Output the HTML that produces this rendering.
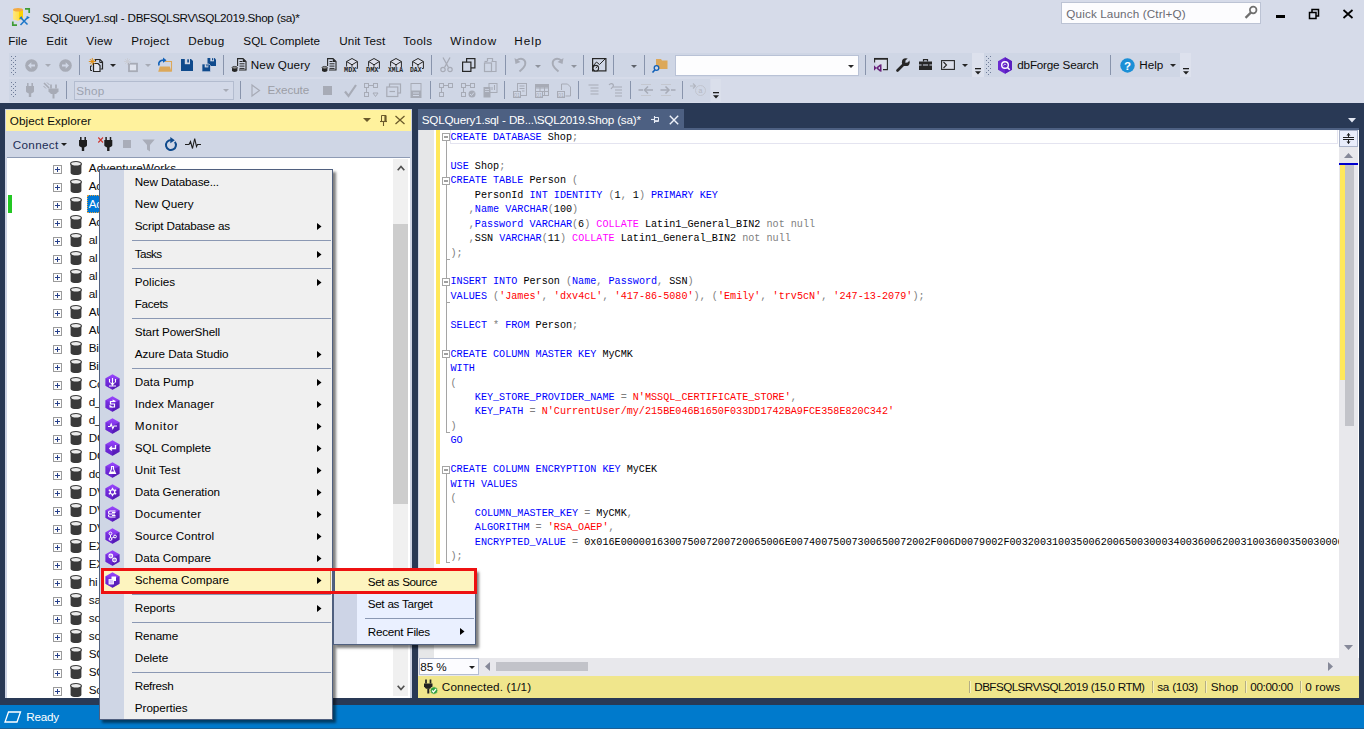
<!DOCTYPE html>
<html><head><meta charset="utf-8"><title>SQLQuery1.sql - DBFSQLSRV\SQL2019.Shop (sa)* - Microsoft SQL Server Management Studio</title>
<style>
html,body{margin:0;padding:0;}
body{width:1364px;height:729px;overflow:hidden;position:relative;background:#d6dbe9;font-family:"Liberation Sans",sans-serif;font-size:12px;}
body div,body span,body svg,body pre{position:absolute;}
span{white-space:pre;}
svg{overflow:visible;}
</style></head><body>
<div style="left:0px;top:0px;width:1364px;height:103px;background:#d6dbe9;"></div>
<div style="left:0px;top:103px;width:1364px;height:602px;background:#293955;"></div>
<div style="left:0px;top:705px;width:1364px;height:24px;background:#007acc;"></div>
<div style="left:0px;top:728px;width:1364px;height:1px;background:#1c5f94;"></div>
<span style="left:42.30px;top:9.60px;font-size:11.7px;line-height:16px;color:#0c0c0c;letter-spacing:-0.359px;word-spacing:0.359px;">SQLQuery1.sql - DBFSQLSRV\SQL2019.Shop (sa)*</span>
<div style="left:1061px;top:2px;width:200px;height:22px;background:#fcfcfe;border:1px solid #bcc3d4;box-sizing:border-box;"></div>
<span style="left:1066.30px;top:5.60px;font-size:11.7px;line-height:16px;color:#6a6a72;letter-spacing:0.149px;word-spacing:-0.149px;">Quick Launch (Ctrl+Q)</span>
<span style="left:8.30px;top:32.70px;font-size:11.7px;line-height:16px;color:#0c0c0c;letter-spacing:0.016px;">File</span>
<span style="left:46.30px;top:32.70px;font-size:11.7px;line-height:16px;color:#0c0c0c;letter-spacing:0.247px;">Edit</span>
<span style="left:86.30px;top:32.70px;font-size:11.7px;line-height:16px;color:#0c0c0c;letter-spacing:0.251px;">View</span>
<span style="left:131.30px;top:32.70px;font-size:11.7px;line-height:16px;color:#0c0c0c;letter-spacing:0.248px;">Project</span>
<span style="left:188.30px;top:32.70px;font-size:11.7px;line-height:16px;color:#0c0c0c;letter-spacing:0.356px;">Debug</span>
<span style="left:243.30px;top:32.70px;font-size:11.7px;line-height:16px;color:#0c0c0c;letter-spacing:0.060px;word-spacing:-0.060px;">SQL Complete</span>
<span style="left:339.30px;top:32.70px;font-size:11.7px;line-height:16px;color:#0c0c0c;letter-spacing:0.085px;word-spacing:-0.085px;">Unit Test</span>
<span style="left:403.30px;top:32.70px;font-size:11.7px;line-height:16px;color:#0c0c0c;letter-spacing:0.397px;">Tools</span>
<span style="left:450.30px;top:32.70px;font-size:11.7px;line-height:16px;color:#0c0c0c;letter-spacing:0.858px;">Window</span>
<span style="left:514.30px;top:32.70px;font-size:11.7px;line-height:16px;color:#0c0c0c;letter-spacing:0.946px;">Help</span>
<div style="left:9px;top:53px;width:963px;height:24px;background:#cfd6e5;"></div>
<div style="left:984px;top:53px;width:196px;height:24px;background:#cfd6e5;"></div>
<div style="left:1180px;top:53px;width:11px;height:24px;background:#dde1ed;"></div>
<div style="left:9px;top:79px;width:701px;height:23px;background:#cfd6e5;"></div>
<svg style="left:11px;top:56px;" width="6" height="17" viewBox="0 0 6 17"><g fill="#6f7c99"><rect x="0" y="0" width="1" height="1"/><rect x="4" y="0" width="1" height="1"/><rect x="2" y="2" width="1" height="1"/><rect x="0" y="4" width="1" height="1"/><rect x="4" y="4" width="1" height="1"/><rect x="2" y="6" width="1" height="1"/><rect x="0" y="8" width="1" height="1"/><rect x="4" y="8" width="1" height="1"/><rect x="2" y="10" width="1" height="1"/><rect x="0" y="12" width="1" height="1"/><rect x="4" y="12" width="1" height="1"/><rect x="2" y="14" width="1" height="1"/><rect x="0" y="16" width="1" height="1"/><rect x="4" y="16" width="1" height="1"/><rect x="2" y="18" width="1" height="1"/></g></svg>
<svg style="left:25px;top:59px;" width="13" height="13" viewBox="0 0 13 13"><circle cx="6.5" cy="6.5" r="6.3" fill="#a7abb6"/><path d="M3 6.5l3.3-3.2v2.2h3.7v2h-3.7v2.2z" fill="#cfd6e5"/></svg>
<svg style="left:45px;top:64.0px;" width="6" height="3" viewBox="0 0 6 3"><path d="M0 0h6L3 3z" fill="#a7abb6"/></svg>
<svg style="left:59px;top:59px;" width="13" height="13" viewBox="0 0 13 13"><circle cx="6.5" cy="6.5" r="6.3" fill="#a7abb6"/><path d="M10 6.5l-3.3-3.2v2.2h-3.7v2h3.7v2.2z" fill="#cfd6e5"/></svg>
<div style="left:79px;top:55px;width:1px;height:20px;background:#8894ac;"></div>
<svg style="left:89px;top:58px;" width="14" height="14" viewBox="0 0 14 14"><path d="M6.500 3.500v-2h4.500l2.500 2.500v7h-2" fill="none" stroke="#262626" stroke-width="1.200"/><path d="M10.800 1.500v3h2.700" fill="none" stroke="#262626" stroke-width="1"/><path d="M4.500 5.500h4.500l2 2v6h-6.500z" fill="#e3e6f0" stroke="#262626" stroke-width="1.200"/><path d="M3 8h-1.500v4.500h1.500" fill="none" stroke="#262626" stroke-width="1"/><path d="M3.300 0v7M-0.200 3.500h7M0.800 1l5 5M5.800 1l-5 5" stroke="#e08a0c" stroke-width="0.900"/></svg>
<svg style="left:110px;top:64.0px;" width="6" height="3" viewBox="0 0 6 3"><path d="M0 0h6L3 3z" fill="#262626"/></svg>
<svg style="left:124px;top:58px;" width="14" height="14" viewBox="0 0 14 14"><rect x="5" y="5.700" width="8" height="7.500" fill="#dfe3ee" stroke="#a7abb6" stroke-width="1.800"/><path d="M3.500 0v7M0 3.500h7M1 1l5 5M6 1l-5 5" stroke="#c9ccd4" stroke-width="0.900"/></svg>
<svg style="left:145px;top:64.0px;" width="6" height="3" viewBox="0 0 6 3"><path d="M0 0h6L3 3z" fill="#a7abb6"/></svg>
<svg style="left:157px;top:57px;" width="16" height="16" viewBox="0 0 16 16"><path d="M8 4.500h6.500v10" fill="none" stroke="#dca85a" stroke-width="1.100"/><path d="M2.800 9.500h10l1.700 5.300h-13.300z" fill="#dca85a"/><path d="M2 8.500c-1-3 1-5.500 5-5.300" fill="none" stroke="#1160b7" stroke-width="1.700"/><path d="M6 0.500l3.500 2.700-3.500 2.600z" fill="#1160b7"/></svg>
<svg style="left:181px;top:59px;" width="12" height="12" viewBox="0 0 12 12"><path d="M0 0h10l2 2v10h-12z" fill="#0f4a8c"/><rect x="3.800" y="0" width="5.200" height="5.200" fill="#cfd6e5"/><rect x="6.300" y="0.300" width="1.600" height="3.200" fill="#0f4a8c"/></svg>
<svg style="left:202px;top:58px;" width="14" height="14" viewBox="0 0 14 14"><path d="M5.500 0h7l1.500 1.500v6.500h-8.500z" fill="#0f4a8c"/><rect x="8.300" y="0" width="3.700" height="3.300" fill="#cfd6e5"/><rect x="10" y="0.200" width="1.200" height="2.100" fill="#0f4a8c"/><path d="M0 6h7l1.500 1.500v6.200h-8.500z" fill="#0f4a8c" stroke="#cfd6e5" stroke-width="0.700"/><rect x="2.700" y="6.200" width="3.600" height="3.200" fill="#cfd6e5"/><rect x="4.400" y="6.300" width="1.200" height="2.100" fill="#0f4a8c"/></svg>
<div style="left:223px;top:55px;width:1px;height:20px;background:#8894ac;"></div>
<svg style="left:232px;top:58px;" width="15" height="14" viewBox="0 0 15 14"><path d="M5.600 8v-7.400h5.400l3 3v8.400h-7" fill="#cfd6e5" stroke="#262626" stroke-width="1.100"/><path d="M10.800 0.600v3.400h3.200z" fill="#262626"/><path d="M7.500 3.500h3M7.500 5.800h5M7.500 8.100h5M7.500 10.400h5" stroke="#262626" stroke-width="1"/><path d="M0 9.800v2.800a2.700 1.300 0 0 0 5.400 0v-2.800z" fill="#262626"/><ellipse cx="2.700" cy="9.700" rx="2.700" ry="1.300" fill="#8c8c8c" stroke="#262626" stroke-width="0.700"/></svg>
<span style="left:250.70px;top:57.40px;font-size:11.7px;line-height:16px;color:#0c0c0c;letter-spacing:0.141px;word-spacing:-0.141px;">New Query</span>
<svg style="left:322px;top:58px;" width="15" height="14" viewBox="0 0 15 14"><path d="M5.600 8v-7.400h5.400l3 3v8.400h-7" fill="#cfd6e5" stroke="#262626" stroke-width="1.100"/><path d="M10.800 0.600v3.400h3.200z" fill="#262626"/><path d="M7.500 3.500h3M7.500 5.800h5M7.500 8.100h5M7.500 10.400h5" stroke="#262626" stroke-width="1"/><path d="M0 9.800v2.800a2.700 1.300 0 0 0 5.400 0v-2.800z" fill="#262626"/><ellipse cx="2.700" cy="9.700" rx="2.700" ry="1.300" fill="#8c8c8c" stroke="#262626" stroke-width="0.700"/></svg>
<svg style="left:346px;top:58px;" width="12" height="11" viewBox="0 0 12 11"><path d="M0.600 8.500v-5l5.400-3 5.400 3v7h-1.500" fill="#dcdfea" stroke="#262626" stroke-width="1"/><path d="M0.600 3.500l5.400 3.300 5.400-3.300M6 6.800v2" fill="none" stroke="#262626" stroke-width="1"/></svg>
<svg style="left:344px;top:66px;" width="12.5" height="7" viewBox="0 0 12.5 7"><rect x="0" y="1" width="12.5" height="5.500" fill="#cfd6e5"/><text x="0" y="6" font-size="6.300" font-weight="bold" fill="#262626" font-family="Liberation Mono, monospace" textLength="12.5" lengthAdjust="spacingAndGlyphs">MDX</text></svg>
<svg style="left:368px;top:58px;" width="12" height="11" viewBox="0 0 12 11"><path d="M0.600 8.500v-5l5.400-3 5.400 3v7h-1.500" fill="#dcdfea" stroke="#262626" stroke-width="1"/><path d="M0.600 3.500l5.400 3.300 5.400-3.300M6 6.800v2" fill="none" stroke="#262626" stroke-width="1"/></svg>
<svg style="left:366px;top:66px;" width="12.5" height="7" viewBox="0 0 12.5 7"><rect x="0" y="1" width="12.5" height="5.500" fill="#cfd6e5"/><text x="0" y="6" font-size="6.300" font-weight="bold" fill="#262626" font-family="Liberation Mono, monospace" textLength="12.5" lengthAdjust="spacingAndGlyphs">DMX</text></svg>
<svg style="left:390px;top:58px;" width="12" height="11" viewBox="0 0 12 11"><path d="M0.600 8.500v-5l5.400-3 5.400 3v7h-1.500" fill="#dcdfea" stroke="#262626" stroke-width="1"/><path d="M0.600 3.500l5.400 3.300 5.400-3.300M6 6.800v2" fill="none" stroke="#262626" stroke-width="1"/></svg>
<svg style="left:388px;top:66px;" width="15" height="7" viewBox="0 0 15 7"><rect x="0" y="1" width="15" height="5.500" fill="#cfd6e5"/><text x="0" y="6" font-size="6.300" font-weight="bold" fill="#262626" font-family="Liberation Mono, monospace" textLength="15" lengthAdjust="spacingAndGlyphs">XMLA</text></svg>
<svg style="left:412px;top:58px;" width="12" height="11" viewBox="0 0 12 11"><path d="M0.600 8.500v-5l5.400-3 5.400 3v7h-1.500" fill="#dcdfea" stroke="#262626" stroke-width="1"/><path d="M0.600 3.500l5.400 3.300 5.400-3.300M6 6.800v2" fill="none" stroke="#262626" stroke-width="1"/></svg>
<svg style="left:410px;top:66px;" width="11.5" height="7" viewBox="0 0 11.5 7"><rect x="0" y="1" width="11.5" height="5.500" fill="#cfd6e5"/><text x="0" y="6" font-size="6.300" font-weight="bold" fill="#262626" font-family="Liberation Mono, monospace" textLength="11.5" lengthAdjust="spacingAndGlyphs">DAX</text></svg>
<div style="left:431px;top:55px;width:1px;height:20px;background:#8894ac;"></div>
<svg style="left:440px;top:57px;" width="13" height="16" viewBox="0 0 13 16"><path d="M3 0.500l5.500 10M10 0.500l-5.500 10" stroke="#a7abb6" stroke-width="1.300" fill="none"/><circle cx="3" cy="12.500" r="2.200" fill="none" stroke="#a7abb6" stroke-width="1.200"/><circle cx="10" cy="12.500" r="2.200" fill="none" stroke="#a7abb6" stroke-width="1.200"/></svg>
<svg style="left:462px;top:58px;" width="14" height="14" viewBox="0 0 14 14"><rect x="4.600" y="0.600" width="8.300" height="9.300" fill="none" stroke="#262626" stroke-width="1.200"/><rect x="0.600" y="4.100" width="8.300" height="9.300" fill="#cfd6e5" stroke="#262626" stroke-width="1.200"/></svg>
<svg style="left:483px;top:57px;" width="14" height="16" viewBox="0 0 14 16"><path d="M4.500 4v-2.500h5v2.500" fill="none" stroke="#a7abb6" stroke-width="1.200"/><rect x="1.500" y="6" width="7" height="8.500" fill="none" stroke="#a7abb6" stroke-width="1.200"/><path d="M8.500 4.500h4.500v10h-4" fill="none" stroke="#a7abb6" stroke-width="1.200"/><path d="M1.500 4.500h3" stroke="#a7abb6" stroke-width="1.200"/></svg>
<div style="left:505px;top:55px;width:1px;height:20px;background:#8894ac;"></div>
<svg style="left:514px;top:57px;" width="14" height="16" viewBox="0 0 14 16"><path d="M2.500 3.500c5-3.500 10-1 8.500 4.500-0.800 2.500-3 4.500-5.500 6.500" fill="none" stroke="#a7abb6" stroke-width="2"/><path d="M0.500 1l1 6 5-2z" fill="#a7abb6"/></svg>
<svg style="left:535px;top:64.5px;" width="6" height="3" viewBox="0 0 6 3"><path d="M0 0h6L3 3z" fill="#8f939d"/></svg>
<svg style="left:550px;top:57px;" width="14" height="16" viewBox="0 0 14 16"><path d="M11.500 3.500c-5-3.500-10-1-8.500 4.500 0.800 2.500 3 4.500 5.500 6.500" fill="none" stroke="#a7abb6" stroke-width="2"/><path d="M13.500 1l-1 6-5-2z" fill="#a7abb6"/></svg>
<svg style="left:571px;top:64.5px;" width="6" height="3" viewBox="0 0 6 3"><path d="M0 0h6L3 3z" fill="#8f939d"/></svg>
<div style="left:583px;top:55px;width:1px;height:20px;background:#8894ac;"></div>
<svg style="left:592px;top:58px;" width="15" height="14" viewBox="0 0 15 14"><rect x="0.600" y="0.600" width="13.300" height="12.300" fill="none" stroke="#262626" stroke-width="1.200"/><path d="M1 8l3.500-4 3 2.500 5.500-5.500" fill="none" stroke="#262626" stroke-width="1"/><circle cx="3.800" cy="10.200" r="2.800" fill="#cfd6e5" stroke="#262626" stroke-width="1.100"/><path d="M3.800 10.200l1.500-1.700" stroke="#262626" stroke-width="0.900"/></svg>
<div style="left:613px;top:55px;width:1px;height:20px;background:#8894ac;"></div>
<svg style="left:631px;top:64.5px;" width="6" height="3" viewBox="0 0 6 3"><path d="M0 0h6L3 3z" fill="#5d6169"/></svg>
<div style="left:644px;top:55px;width:1px;height:20px;background:#8894ac;"></div>
<svg style="left:652px;top:57px;" width="16" height="16" viewBox="0 0 16 16"><path d="M4 2h5l1 1.500h5.500v8.500h-11.500z" fill="#dca85a"/><circle cx="4.500" cy="11" r="2.300" fill="#cfd6e5" stroke="#1160b7" stroke-width="1.300"/><path d="M3 12.700l-2.500 2.800" stroke="#1160b7" stroke-width="1.600"/></svg>
<div style="left:675px;top:55px;width:184px;height:21px;background:#fdfdfe;border:1px solid #b9c2d6;box-sizing:border-box;"></div>
<svg style="left:848px;top:64.5px;" width="6" height="3" viewBox="0 0 6 3"><path d="M0 0h6L3 3z" fill="#262626"/></svg>
<div style="left:865px;top:55px;width:1px;height:20px;background:#8894ac;"></div>
<svg style="left:874px;top:58px;" width="14" height="14" viewBox="0 0 14 14"><path d="M0.600 4.500v-3.500h12.800v10.600h-4.400" fill="#dcdfea" stroke="#262626" stroke-width="1.100"/><path d="M0 0.700h14" stroke="#262626" stroke-width="1.500"/><path d="M0 7.300l2.600 2.700-2.600 2.700zM7.500 6.200v7.600l-1.600-0.300-4.200-3.500 4.200-3.500zM6 8.400l-1.900 1.600 1.900 1.600z" fill="#68217a" fill-rule="evenodd"/></svg>
<svg style="left:896px;top:58px;" width="14" height="14" viewBox="0 0 14 14"><path d="M1.500 12.500l6.500-6.500" stroke="#262626" stroke-width="2.700" stroke-linecap="round"/><circle cx="9.800" cy="4.200" r="3.900" fill="#262626"/><path d="M9.300 4.700l0.300-2.300 2.700-2.700 2 2-2.700 2.700z" fill="#cfd6e5"/></svg>
<svg style="left:919px;top:59px;" width="13" height="11" viewBox="0 0 13 11"><path d="M4.500 2.500v-1.800h4v1.800" fill="none" stroke="#262626" stroke-width="1.200"/><rect x="0" y="2.500" width="13" height="8.500" fill="#262626"/><rect x="0" y="5.500" width="13" height="1" fill="#cfd6e5"/><rect x="2.600" y="4.800" width="1.300" height="2.400" fill="#262626"/><rect x="9.100" y="4.800" width="1.300" height="2.400" fill="#262626"/></svg>
<svg style="left:941px;top:60px;" width="14" height="10" viewBox="0 0 14 10"><rect x="0.600" y="0.600" width="12.800" height="8.800" fill="#dcdfea" stroke="#262626" stroke-width="1.100"/><path d="M2.500 2l3 3-3 3" fill="none" stroke="#262626" stroke-width="1.100"/></svg>
<svg style="left:962px;top:64.2px;" width="6" height="3" viewBox="0 0 6 3"><path d="M0 0h6L3 3z" fill="#262626"/></svg>
<div style="left:972px;top:53px;width:12px;height:24px;background:#dde1ed;"></div>
<svg style="left:975px;top:68px;" width="6" height="7" viewBox="0 0 6 7"><rect x="0" y="0" width="6" height="1.300" fill="#1e1e1e"/><path d="M0 3.200h6L3 6.400z" fill="#1e1e1e"/></svg>
<svg style="left:986px;top:56px;" width="6" height="17" viewBox="0 0 6 17"><g fill="#6f7c99"><rect x="0" y="0" width="1" height="1"/><rect x="4" y="0" width="1" height="1"/><rect x="2" y="2" width="1" height="1"/><rect x="0" y="4" width="1" height="1"/><rect x="4" y="4" width="1" height="1"/><rect x="2" y="6" width="1" height="1"/><rect x="0" y="8" width="1" height="1"/><rect x="4" y="8" width="1" height="1"/><rect x="2" y="10" width="1" height="1"/><rect x="0" y="12" width="1" height="1"/><rect x="4" y="12" width="1" height="1"/><rect x="2" y="14" width="1" height="1"/><rect x="0" y="16" width="1" height="1"/><rect x="4" y="16" width="1" height="1"/><rect x="2" y="18" width="1" height="1"/></g></svg>
<svg style="left:997px;top:57px;" width="16" height="17" viewBox="0 0 16 17"><path d="M8 0.300l7 4v8.400l-7 4-7-4v-8.400z" fill="#6c2ad1"/><path d="M8 0.300l7 4v8.400l-7 4z" fill="#5a1fc0"/><circle cx="8" cy="8" r="3.300" fill="none" stroke="#fff" stroke-width="1.400"/><path d="M10.500 10.500l2.200 2.200" stroke="#fff" stroke-width="1.500"/><path d="M6.300 8.600l1.700-1.700 1.300 1.300" stroke="#fff" stroke-width="0.700" fill="none"/></svg>
<span style="left:1017.30px;top:57.20px;font-size:11.7px;line-height:16px;color:#0c0c0c;letter-spacing:-0.208px;word-spacing:0.208px;">dbForge Search</span>
<div style="left:1110px;top:55px;width:1px;height:20px;background:#8894ac;"></div>
<svg style="left:1119.5px;top:57.5px;" width="15" height="15" viewBox="0 0 15 15"><circle cx="7.500" cy="7.500" r="7.200" fill="#1b8fd6"/><text x="7.500" y="11.800" font-size="11.500" font-weight="bold" text-anchor="middle" fill="#fff" font-family="Liberation Sans, sans-serif">?</text></svg>
<span style="left:1139.30px;top:56.50px;font-size:11.7px;line-height:16px;color:#0c0c0c;letter-spacing:-0.054px;">Help</span>
<svg style="left:1170px;top:64.1px;" width="6" height="3" viewBox="0 0 6 3"><path d="M0 0h6L3 3z" fill="#262626"/></svg>
<svg style="left:1183px;top:68px;" width="6" height="7" viewBox="0 0 6 7"><rect x="0" y="0" width="6" height="1.300" fill="#1e1e1e"/><path d="M0 3.200h6L3 6.400z" fill="#1e1e1e"/></svg>
<svg style="left:11px;top:82px;" width="6" height="15" viewBox="0 0 6 15"><g fill="#6f7c99"><rect x="0" y="0" width="1" height="1"/><rect x="4" y="0" width="1" height="1"/><rect x="2" y="2" width="1" height="1"/><rect x="0" y="4" width="1" height="1"/><rect x="4" y="4" width="1" height="1"/><rect x="2" y="6" width="1" height="1"/><rect x="0" y="8" width="1" height="1"/><rect x="4" y="8" width="1" height="1"/><rect x="2" y="10" width="1" height="1"/><rect x="0" y="12" width="1" height="1"/><rect x="4" y="12" width="1" height="1"/><rect x="2" y="14" width="1" height="1"/></g></svg>
<svg style="left:26px;top:83px;" width="8" height="14" viewBox="0 0 8 14"><path d="M1.800 0v3.500M6.200 0v3.500" stroke="#a7abb6" stroke-width="1.500"/><path d="M0 3h8v5.200c0 1-1.500 1.800-2.800 2.300v3.500h-2.400v-3.500c-1.300-0.500-2.800-1.300-2.800-2.300z" fill="#a7abb6"/></svg>
<svg style="left:43px;top:82px;" width="16" height="17" viewBox="0 0 16 17"><path d="M1 1l5 5" stroke="#a7abb6" stroke-width="1.600"/><path d="M4 0.500l2.500 2.500M0.500 4l2.500 2.500" stroke="#a7abb6" stroke-width="1"/><path d="M8 2.500v4M13 2.500v4" stroke="#a7abb6" stroke-width="1.700"/><path d="M5.500 6.500h10v3l-2.500 2.500h-5l-2.500-2.500z" fill="#a7abb6"/><rect x="9.500" y="11.500" width="2" height="5" fill="#a7abb6"/></svg>
<div style="left:66px;top:81px;width:1px;height:18px;background:#8894ac;"></div>
<div style="left:74px;top:81px;width:160px;height:19px;background:#d3d9e8;border:1px solid #b3bccf;box-sizing:border-box;"></div>
<span style="left:76.30px;top:82.50px;font-size:11.7px;line-height:16px;color:#9da3b0;letter-spacing:0.193px;">Shop</span>
<svg style="left:223px;top:89.0px;" width="6" height="3" viewBox="0 0 6 3"><path d="M0 0h6L3 3z" fill="#a7abb6"/></svg>
<div style="left:240px;top:81px;width:1px;height:18px;background:#8894ac;"></div>
<svg style="left:251px;top:84px;" width="10" height="13" viewBox="0 0 10 13"><path d="M1 1l7.500 5.500-7.500 5.500z" fill="none" stroke="#a7abb6" stroke-width="1.200"/></svg>
<span style="left:267.60px;top:81.50px;font-size:11.7px;line-height:16px;color:#9c9ea6;letter-spacing:-0.112px;">Execute</span>
<div style="left:323px;top:86px;width:9px;height:9px;background:#a7abb6;"></div>
<svg style="left:344px;top:84px;" width="13" height="13" viewBox="0 0 13 13"><path d="M1 7.500l3.500 4.500 7.500-11" fill="none" stroke="#a7abb6" stroke-width="2.200"/></svg>
<svg style="left:364px;top:83px;" width="15" height="15" viewBox="0 0 15 15"><rect x="0.5" y="0.5" width="4" height="4" fill="none" stroke="#a7abb6" stroke-width="1"/><rect x="9.5" y="0.5" width="4" height="4" fill="none" stroke="#a7abb6" stroke-width="1"/><rect x="0.5" y="9.5" width="4" height="4" fill="none" stroke="#a7abb6" stroke-width="1"/><path d="M5 2.500h4M2.500 5v4" stroke="#a7abb6" stroke-width="1"/><path d="M9 10h5l-2.500 3.500z" fill="none" stroke="#a7abb6" stroke-width="1"/></svg>
<svg style="left:386px;top:83px;" width="15" height="15" viewBox="0 0 15 15"><rect x="3.500" y="1" width="11" height="9" fill="none" stroke="#a7abb6" stroke-width="1.200"/><rect x="0.800" y="4" width="11" height="9.500" fill="#cfd6e5" stroke="#a7abb6" stroke-width="1.200"/><path d="M3.500 8.500h5.500" stroke="#a7abb6" stroke-width="1.200"/></svg>
<svg style="left:410px;top:83px;" width="12" height="15" viewBox="0 0 12 15"><rect x="1" y="0.500" width="10" height="14" fill="none" stroke="#a7abb6" stroke-width="1"/><rect x="1" y="7.500" width="10" height="7" fill="#a7abb6"/><path d="M3 10h6M3 12.500h6" stroke="#cfd6e5" stroke-width="1"/></svg>
<div style="left:430px;top:81px;width:1px;height:18px;background:#8894ac;"></div>
<svg style="left:439px;top:83px;" width="15" height="15" viewBox="0 0 15 15"><rect x="0.5" y="0.5" width="4" height="4" fill="none" stroke="#a7abb6" stroke-width="1"/><rect x="9.5" y="0.5" width="4" height="4" fill="none" stroke="#a7abb6" stroke-width="1"/><rect x="0.5" y="9.5" width="4" height="4" fill="none" stroke="#a7abb6" stroke-width="1"/><path d="M5 2.500h4M2.500 5v4" stroke="#a7abb6" stroke-width="1"/></svg>
<svg style="left:461px;top:83px;" width="15" height="15" viewBox="0 0 15 15"><rect x="0.5" y="0.5" width="4" height="4" fill="none" stroke="#a7abb6" stroke-width="1"/><rect x="9.5" y="0.5" width="4" height="4" fill="none" stroke="#a7abb6" stroke-width="1"/><rect x="0.5" y="9.5" width="4" height="4" fill="none" stroke="#a7abb6" stroke-width="1"/><path d="M5 2.500h4M2.500 5v4" stroke="#a7abb6" stroke-width="1"/><circle cx="11" cy="11" r="3.500" fill="#a7abb6"/><path d="M9 11l1.500 1.500 2.500-3" stroke="#cfd6e5" stroke-width="1" fill="none"/></svg>
<svg style="left:483px;top:83px;" width="15" height="15" viewBox="0 0 15 15"><rect x="6" y="0.500" width="8" height="9" fill="none" stroke="#a7abb6" stroke-width="1"/><path d="M9 7v-3M11.500 7v-5" stroke="#a7abb6" stroke-width="1"/><rect x="0.500" y="4" width="7" height="10.500" fill="#a7abb6"/><path d="M2 6.500h4M2 8.500h4" stroke="#cfd6e5" stroke-width="0.800"/></svg>
<div style="left:504px;top:81px;width:1px;height:18px;background:#8894ac;"></div>
<svg style="left:513px;top:83px;" width="15" height="15" viewBox="0 0 15 15"><rect x="4.500" y="0.500" width="9" height="12" fill="none" stroke="#a7abb6" stroke-width="1"/><path d="M6.500 3h5M6.500 5.500h5M9 8h2.500" stroke="#a7abb6" stroke-width="1"/><rect x="0.500" y="8.500" width="7" height="6" fill="#cfd6e5" stroke="#a7abb6" stroke-width="1"/><text x="4" y="13.600" font-size="5.500" text-anchor="middle" fill="#a7abb6" font-family="Liberation Sans, sans-serif">01</text></svg>
<svg style="left:535px;top:83px;" width="15" height="15" viewBox="0 0 15 15"><rect x="0.500" y="1.500" width="13" height="11" fill="none" stroke="#a7abb6" stroke-width="1"/><path d="M0.500 5h13M0.500 8.500h13M5 1.500v11M9.500 1.500v11" stroke="#a7abb6" stroke-width="1"/><rect x="0.500" y="1.500" width="13" height="3" fill="#a7abb6"/><rect x="0.500" y="8.500" width="7" height="6" fill="#cfd6e5" stroke="#a7abb6" stroke-width="1"/><text x="4" y="13.600" font-size="5.500" text-anchor="middle" fill="#a7abb6" font-family="Liberation Sans, sans-serif">01</text></svg>
<svg style="left:557px;top:83px;" width="15" height="15" viewBox="0 0 15 15"><path d="M4.500 7v-6h6l3 3v9h-5" fill="none" stroke="#a7abb6" stroke-width="1"/><rect x="0.500" y="8.500" width="7" height="6" fill="#cfd6e5" stroke="#a7abb6" stroke-width="1"/><text x="4" y="13.600" font-size="5.500" text-anchor="middle" fill="#a7abb6" font-family="Liberation Sans, sans-serif">01</text></svg>
<div style="left:578px;top:81px;width:1px;height:18px;background:#8894ac;"></div>
<svg style="left:588px;top:84px;" width="11" height="12" viewBox="0 0 11 12"><path d="M0.500 1h10M2.500 4h8M2.500 7h8M2.500 10h8" stroke="#a7abb6" stroke-width="1"/></svg>
<svg style="left:608px;top:83px;" width="15" height="14" viewBox="0 0 15 14"><path d="M5 4h9M7 7h7M7 10h7M7 13h7" stroke="#a7abb6" stroke-width="1"/><path d="M1 2c2-2.500 5.500-1 4 1.500l-2 2.500" fill="none" stroke="#a7abb6" stroke-width="1.200"/></svg>
<div style="left:630px;top:81px;width:1px;height:18px;background:#8894ac;"></div>
<svg style="left:638px;top:84px;" width="16" height="12" viewBox="0 0 16 12"><path d="M3 0.500h10M3 11.500h10" stroke="#c4c7cf" stroke-width="1"/><path d="M0.500 6h4.500M7 6h8" stroke="#a7abb6" stroke-width="1.500"/><path d="M10 2.500l-3.500 3.500 3.500 3.500" fill="none" stroke="#a7abb6" stroke-width="1.500"/></svg>
<svg style="left:660px;top:84px;" width="16" height="12" viewBox="0 0 16 12"><path d="M1 0.500h10M1 11.500h10" stroke="#c4c7cf" stroke-width="1"/><path d="M0.500 6h8M11 6h4.500" stroke="#a7abb6" stroke-width="1.500"/><path d="M5.500 2.500l3.500 3.500-3.500 3.500" fill="none" stroke="#a7abb6" stroke-width="1.500"/></svg>
<div style="left:682px;top:81px;width:1px;height:18px;background:#8894ac;"></div>
<svg style="left:689px;top:82px;" width="18" height="16" viewBox="0 0 18 16"><path d="M1 4h5M4 1.500l2.500 2.500-2.500 2.500" fill="none" stroke="#b3b7c1" stroke-width="1.200"/><circle cx="11.500" cy="8.500" r="5" fill="none" stroke="#bfc3cc" stroke-width="0.900"/><text x="11.500" y="11" font-size="7" text-anchor="middle" fill="#b3b7c1" font-family="Liberation Sans, sans-serif">a</text></svg>
<div style="left:711px;top:79px;width:10px;height:23px;background:#dadfeb;"></div>
<svg style="left:712.5px;top:92px;" width="6" height="7" viewBox="0 0 6 7"><rect x="0" y="0" width="6" height="1.300" fill="#1e1e1e"/><path d="M0 3.200h6L3 6.400z" fill="#1e1e1e"/></svg>
<svg style="left:12px;top:8px;" width="18" height="18" viewBox="0 0 18 18"><defs><linearGradient id="cy" x1="0" x2="1"><stop offset="0" stop-color="#ffe682"/><stop offset="0.55" stop-color="#ffdf4a"/><stop offset="0.56" stop-color="#ffd400"/><stop offset="1" stop-color="#ffd000"/></linearGradient></defs><path d="M1 2h10v8.500l-5 2.200-5-1.200z" fill="url(#cy)"/><ellipse cx="6" cy="1.800" rx="5" ry="1.800" fill="#f4aa41"/><path d="M13 0.800h4.200v4.200" fill="none" stroke="#3f9c35" stroke-width="1.700"/><path d="M0.800 13.500v3.700h4.200" fill="none" stroke="#3f9c35" stroke-width="1.700"/><path d="M8.500 9.500l7 7M16 9l-7.500 8" stroke="#1d77c9" stroke-width="1.500" fill="none"/><path d="M7 10.500l2.500-2.500 1 3z" fill="#1d77c9"/><path d="M14.500 8l3.300 1.200-2.300 2z" fill="#1d77c9"/></svg>
<svg style="left:1243px;top:5px;" width="16" height="16" viewBox="0 0 16 16"><circle cx="10.200" cy="5" r="3.300" fill="none" stroke="#6f6f6f" stroke-width="1.700"/><path d="M7.800 7.600l-5.300 5.300" stroke="#6f6f6f" stroke-width="2.200"/></svg>
<div style="left:1276px;top:15px;width:9px;height:3px;background:#000;"></div>
<svg style="left:1308px;top:8px;" width="12" height="12" viewBox="0 0 12 12"><path d="M4 4v-2.500h6.500v6.500h-2.500" fill="none" stroke="#000" stroke-width="1.500"/><rect x="1.500" y="4.500" width="6.500" height="6" fill="none" stroke="#000" stroke-width="1.500"/></svg>
<svg style="left:1343px;top:10px;" width="10" height="8" viewBox="0 0 10 8"><path d="M0.500 0l9 8M9.500 0l-9 8" stroke="#000" stroke-width="1.700"/></svg>
<div style="left:5px;top:109px;width:407px;height:589px;background:#ced4e4;"></div>
<div style="left:6px;top:110px;width:405px;height:21px;background:#fff29d;"></div>
<span style="left:9.80px;top:112.80px;font-size:11.7px;line-height:16px;color:#0c0c0c;letter-spacing:0.059px;word-spacing:-0.059px;">Object Explorer</span>
<svg style="left:363px;top:118px;" width="8" height="4" viewBox="0 0 8 4"><path d="M0 0h8l-4 4z" fill="#6b5a2b"/></svg>
<svg style="left:380px;top:115px;" width="7" height="11" viewBox="0 0 7 11"><path d="M1.500 6v-5.500h4.500v5.500" fill="none" stroke="#6b5a2b" stroke-width="1"/><path d="M5.300 0.500v5.500" stroke="#6b5a2b" stroke-width="1.800"/><path d="M0 6.500h7" stroke="#6b5a2b" stroke-width="1.100"/><path d="M3.500 7v4" stroke="#6b5a2b" stroke-width="1.100"/></svg>
<svg style="left:395px;top:116px;" width="10" height="8" viewBox="0 0 10 8"><path d="M0.500 0l9 8M9.500 0l-9 8" stroke="#6b5a2b" stroke-width="1.300"/></svg>
<div style="left:6px;top:131px;width:405px;height:26px;background:#cfd6e5;"></div>
<span style="left:12.80px;top:136.50px;font-size:11.7px;line-height:16px;color:#1b2d55;letter-spacing:0.304px;">Connect</span>
<svg style="left:61.3px;top:143px;" width="6" height="3" viewBox="0 0 6 3"><path d="M0 0h6l-3 3z" fill="#1e1e1e"/></svg>
<svg style="left:79px;top:137px;" width="8" height="14" viewBox="0 0 8 14"><path d="M1.800 0v3.500M6.200 0v3.500" stroke="#1e1e1e" stroke-width="1.500"/><path d="M0 3h8v5.200c0 1-1.500 1.800-2.800 2.300v3.500h-2.400v-3.500c-1.300-0.500-2.800-1.300-2.800-2.300z" fill="#1e1e1e"/></svg>
<svg style="left:98px;top:137px;" width="15" height="14" viewBox="0 0 15 14"><path d="M0.300 0.500l4.700 5M5 0.500l-4.700 5" stroke="#d0342c" stroke-width="1.100"/><g transform="translate(6.300,0)"><path d="M1.800 0v3.500M6.200 0v3.500" stroke="#1e1e1e" stroke-width="1.500"/><path d="M0 3h8v5.200c0 1-1.500 1.800-2.800 2.300v3.500h-2.400v-3.500c-1.300-0.500-2.800-1.300-2.800-2.300z" fill="#1e1e1e"/></g></svg>
<div style="left:123px;top:140px;width:8px;height:8px;background:#a9adb9;"></div>
<svg style="left:142px;top:139px;" width="13" height="13" viewBox="0 0 13 13"><path d="M0.300 0.500h12.400l-4.700 5.500v6.500l-3-2v-4.500z" fill="#a9adb9"/></svg>
<svg style="left:164px;top:137px;" width="14" height="15" viewBox="0 0 14 15"><path d="M10.800 4.800a5 5 0 1 1-4-1.800" fill="none" stroke="#0f4a8c" stroke-width="2"/><path d="M6.300 0l4.500 3.200-4.500 3z" fill="#0f4a8c"/></svg>
<svg style="left:185px;top:138px;" width="16" height="12" viewBox="0 0 16 12"><path d="M0 6.500h4l1.500-3 2 7 2.200-10 1.800 8 1-2h3.500" fill="none" stroke="#1e1e1e" stroke-width="1.100"/></svg>
<div style="left:7px;top:157px;width:403px;height:1px;background:#8e9bb4;"></div>
<div style="left:7px;top:158px;width:403px;height:539.5px;background:#ffffff;"></div>
<div style="left:393px;top:159px;width:15px;height:537px;background:#f0f0f0;"></div>
<svg style="left:396.5px;top:165px;" width="8" height="6" viewBox="0 0 8 6"><path d="M0.700 5.200l3.300-3.700 3.300 3.700" fill="none" stroke="#505050" stroke-width="1.700"/></svg>
<svg style="left:396.5px;top:685px;" width="8" height="6" viewBox="0 0 8 6"><path d="M0.700 0.800l3.300 3.700 3.300-3.700" fill="none" stroke="#505050" stroke-width="1.700"/></svg>
<div style="left:393px;top:224px;width:15px;height:280px;background:#cdcdcd;"></div>
<svg style="left:53px;top:165px;" width="9" height="9" viewBox="0 0 9 9"><rect x="0.500" y="0.500" width="8" height="8" fill="#fdfdfd" stroke="#9b9b9b" stroke-width="1"/><path d="M2 4.500h5M4.500 2v5" stroke="#27408b" stroke-width="1"/></svg>
<svg style="left:70px;top:161px;" width="12" height="15" viewBox="0 0 12 15"><path d="M0.600 2.800v9a5.400 2.300 0 0 0 10.800 0v-9z" fill="#3a3a3a"/><ellipse cx="6" cy="2.800" rx="5.400" ry="2.300" fill="#ececec" stroke="#3a3a3a" stroke-width="1.100"/></svg>
<span style="left:88.80px;top:159.90px;font-size:11.7px;line-height:16px;color:#0c0c0c;letter-spacing:0.087px;">AdventureWorks</span>
<svg style="left:53px;top:183px;" width="9" height="9" viewBox="0 0 9 9"><rect x="0.500" y="0.500" width="8" height="8" fill="#fdfdfd" stroke="#9b9b9b" stroke-width="1"/><path d="M2 4.500h5M4.500 2v5" stroke="#27408b" stroke-width="1"/></svg>
<svg style="left:70px;top:179px;" width="12" height="15" viewBox="0 0 12 15"><path d="M0.600 2.800v9a5.400 2.300 0 0 0 10.800 0v-9z" fill="#3a3a3a"/><ellipse cx="6" cy="2.800" rx="5.400" ry="2.300" fill="#ececec" stroke="#3a3a3a" stroke-width="1.100"/></svg>
<span style="left:88.80px;top:177.90px;font-size:11.7px;line-height:16px;color:#0c0c0c;letter-spacing:-0.250px;">Ac</span>
<svg style="left:53px;top:201px;" width="9" height="9" viewBox="0 0 9 9"><rect x="0.500" y="0.500" width="8" height="8" fill="#fdfdfd" stroke="#9b9b9b" stroke-width="1"/><path d="M2 4.500h5M4.500 2v5" stroke="#27408b" stroke-width="1"/></svg>
<svg style="left:70px;top:197px;" width="12" height="15" viewBox="0 0 12 15"><path d="M0.600 2.800v9a5.400 2.300 0 0 0 10.800 0v-9z" fill="#3a3a3a"/><ellipse cx="6" cy="2.800" rx="5.400" ry="2.300" fill="#ececec" stroke="#3a3a3a" stroke-width="1.100"/></svg>
<div style="left:87px;top:195px;width:60px;height:18px;background:#0078d7;border:1px dotted #e8a33d;box-sizing:border-box;"></div>
<span style="left:88.80px;top:195.90px;font-size:11.7px;line-height:16px;color:#ffffff;letter-spacing:-0.250px;">Ac</span>
<svg style="left:53px;top:219px;" width="9" height="9" viewBox="0 0 9 9"><rect x="0.500" y="0.500" width="8" height="8" fill="#fdfdfd" stroke="#9b9b9b" stroke-width="1"/><path d="M2 4.500h5M4.500 2v5" stroke="#27408b" stroke-width="1"/></svg>
<svg style="left:70px;top:215px;" width="12" height="15" viewBox="0 0 12 15"><path d="M0.600 2.800v9a5.400 2.300 0 0 0 10.800 0v-9z" fill="#3a3a3a"/><ellipse cx="6" cy="2.800" rx="5.400" ry="2.300" fill="#ececec" stroke="#3a3a3a" stroke-width="1.100"/></svg>
<span style="left:88.80px;top:213.90px;font-size:11.7px;line-height:16px;color:#0c0c0c;letter-spacing:-0.250px;">Ac</span>
<svg style="left:53px;top:237px;" width="9" height="9" viewBox="0 0 9 9"><rect x="0.500" y="0.500" width="8" height="8" fill="#fdfdfd" stroke="#9b9b9b" stroke-width="1"/><path d="M2 4.500h5M4.500 2v5" stroke="#27408b" stroke-width="1"/></svg>
<svg style="left:70px;top:233px;" width="12" height="15" viewBox="0 0 12 15"><path d="M0.600 2.800v9a5.400 2.300 0 0 0 10.800 0v-9z" fill="#3a3a3a"/><ellipse cx="6" cy="2.800" rx="5.400" ry="2.300" fill="#ececec" stroke="#3a3a3a" stroke-width="1.100"/></svg>
<span style="left:88.80px;top:231.90px;font-size:11.7px;line-height:16px;color:#0c0c0c;letter-spacing:-0.250px;">al</span>
<svg style="left:53px;top:255px;" width="9" height="9" viewBox="0 0 9 9"><rect x="0.500" y="0.500" width="8" height="8" fill="#fdfdfd" stroke="#9b9b9b" stroke-width="1"/><path d="M2 4.500h5M4.500 2v5" stroke="#27408b" stroke-width="1"/></svg>
<svg style="left:70px;top:251px;" width="12" height="15" viewBox="0 0 12 15"><path d="M0.600 2.800v9a5.400 2.300 0 0 0 10.800 0v-9z" fill="#3a3a3a"/><ellipse cx="6" cy="2.800" rx="5.400" ry="2.300" fill="#ececec" stroke="#3a3a3a" stroke-width="1.100"/></svg>
<span style="left:88.80px;top:249.90px;font-size:11.7px;line-height:16px;color:#0c0c0c;letter-spacing:-0.250px;">al</span>
<svg style="left:53px;top:273px;" width="9" height="9" viewBox="0 0 9 9"><rect x="0.500" y="0.500" width="8" height="8" fill="#fdfdfd" stroke="#9b9b9b" stroke-width="1"/><path d="M2 4.500h5M4.500 2v5" stroke="#27408b" stroke-width="1"/></svg>
<svg style="left:70px;top:269px;" width="12" height="15" viewBox="0 0 12 15"><path d="M0.600 2.800v9a5.400 2.300 0 0 0 10.800 0v-9z" fill="#3a3a3a"/><ellipse cx="6" cy="2.800" rx="5.400" ry="2.300" fill="#ececec" stroke="#3a3a3a" stroke-width="1.100"/></svg>
<span style="left:88.80px;top:267.90px;font-size:11.7px;line-height:16px;color:#0c0c0c;letter-spacing:-0.250px;">al</span>
<svg style="left:53px;top:291px;" width="9" height="9" viewBox="0 0 9 9"><rect x="0.500" y="0.500" width="8" height="8" fill="#fdfdfd" stroke="#9b9b9b" stroke-width="1"/><path d="M2 4.500h5M4.500 2v5" stroke="#27408b" stroke-width="1"/></svg>
<svg style="left:70px;top:287px;" width="12" height="15" viewBox="0 0 12 15"><path d="M0.600 2.800v9a5.400 2.300 0 0 0 10.800 0v-9z" fill="#3a3a3a"/><ellipse cx="6" cy="2.800" rx="5.400" ry="2.300" fill="#ececec" stroke="#3a3a3a" stroke-width="1.100"/></svg>
<span style="left:88.80px;top:285.90px;font-size:11.7px;line-height:16px;color:#0c0c0c;letter-spacing:-0.250px;">al</span>
<svg style="left:53px;top:309px;" width="9" height="9" viewBox="0 0 9 9"><rect x="0.500" y="0.500" width="8" height="8" fill="#fdfdfd" stroke="#9b9b9b" stroke-width="1"/><path d="M2 4.500h5M4.500 2v5" stroke="#27408b" stroke-width="1"/></svg>
<svg style="left:70px;top:305px;" width="12" height="15" viewBox="0 0 12 15"><path d="M0.600 2.800v9a5.400 2.300 0 0 0 10.800 0v-9z" fill="#3a3a3a"/><ellipse cx="6" cy="2.800" rx="5.400" ry="2.300" fill="#ececec" stroke="#3a3a3a" stroke-width="1.100"/></svg>
<span style="left:88.80px;top:303.90px;font-size:11.7px;line-height:16px;color:#0c0c0c;letter-spacing:-0.250px;">AU</span>
<svg style="left:53px;top:327px;" width="9" height="9" viewBox="0 0 9 9"><rect x="0.500" y="0.500" width="8" height="8" fill="#fdfdfd" stroke="#9b9b9b" stroke-width="1"/><path d="M2 4.500h5M4.500 2v5" stroke="#27408b" stroke-width="1"/></svg>
<svg style="left:70px;top:323px;" width="12" height="15" viewBox="0 0 12 15"><path d="M0.600 2.800v9a5.400 2.300 0 0 0 10.800 0v-9z" fill="#3a3a3a"/><ellipse cx="6" cy="2.800" rx="5.400" ry="2.300" fill="#ececec" stroke="#3a3a3a" stroke-width="1.100"/></svg>
<span style="left:88.80px;top:321.90px;font-size:11.7px;line-height:16px;color:#0c0c0c;letter-spacing:-0.250px;">AU</span>
<svg style="left:53px;top:345px;" width="9" height="9" viewBox="0 0 9 9"><rect x="0.500" y="0.500" width="8" height="8" fill="#fdfdfd" stroke="#9b9b9b" stroke-width="1"/><path d="M2 4.500h5M4.500 2v5" stroke="#27408b" stroke-width="1"/></svg>
<svg style="left:70px;top:341px;" width="12" height="15" viewBox="0 0 12 15"><path d="M0.600 2.800v9a5.400 2.300 0 0 0 10.800 0v-9z" fill="#3a3a3a"/><ellipse cx="6" cy="2.800" rx="5.400" ry="2.300" fill="#ececec" stroke="#3a3a3a" stroke-width="1.100"/></svg>
<span style="left:88.80px;top:339.90px;font-size:11.7px;line-height:16px;color:#0c0c0c;letter-spacing:-0.250px;">Bi</span>
<svg style="left:53px;top:363px;" width="9" height="9" viewBox="0 0 9 9"><rect x="0.500" y="0.500" width="8" height="8" fill="#fdfdfd" stroke="#9b9b9b" stroke-width="1"/><path d="M2 4.500h5M4.500 2v5" stroke="#27408b" stroke-width="1"/></svg>
<svg style="left:70px;top:359px;" width="12" height="15" viewBox="0 0 12 15"><path d="M0.600 2.800v9a5.400 2.300 0 0 0 10.800 0v-9z" fill="#3a3a3a"/><ellipse cx="6" cy="2.800" rx="5.400" ry="2.300" fill="#ececec" stroke="#3a3a3a" stroke-width="1.100"/></svg>
<span style="left:88.80px;top:357.90px;font-size:11.7px;line-height:16px;color:#0c0c0c;letter-spacing:-0.250px;">Bi</span>
<svg style="left:53px;top:381px;" width="9" height="9" viewBox="0 0 9 9"><rect x="0.500" y="0.500" width="8" height="8" fill="#fdfdfd" stroke="#9b9b9b" stroke-width="1"/><path d="M2 4.500h5M4.500 2v5" stroke="#27408b" stroke-width="1"/></svg>
<svg style="left:70px;top:377px;" width="12" height="15" viewBox="0 0 12 15"><path d="M0.600 2.800v9a5.400 2.300 0 0 0 10.800 0v-9z" fill="#3a3a3a"/><ellipse cx="6" cy="2.800" rx="5.400" ry="2.300" fill="#ececec" stroke="#3a3a3a" stroke-width="1.100"/></svg>
<span style="left:88.80px;top:375.90px;font-size:11.7px;line-height:16px;color:#0c0c0c;letter-spacing:-0.250px;">Co</span>
<svg style="left:53px;top:399px;" width="9" height="9" viewBox="0 0 9 9"><rect x="0.500" y="0.500" width="8" height="8" fill="#fdfdfd" stroke="#9b9b9b" stroke-width="1"/><path d="M2 4.500h5M4.500 2v5" stroke="#27408b" stroke-width="1"/></svg>
<svg style="left:70px;top:395px;" width="12" height="15" viewBox="0 0 12 15"><path d="M0.600 2.800v9a5.400 2.300 0 0 0 10.800 0v-9z" fill="#3a3a3a"/><ellipse cx="6" cy="2.800" rx="5.400" ry="2.300" fill="#ececec" stroke="#3a3a3a" stroke-width="1.100"/></svg>
<span style="left:88.80px;top:393.90px;font-size:11.7px;line-height:16px;color:#0c0c0c;letter-spacing:-0.250px;">d_</span>
<svg style="left:53px;top:417px;" width="9" height="9" viewBox="0 0 9 9"><rect x="0.500" y="0.500" width="8" height="8" fill="#fdfdfd" stroke="#9b9b9b" stroke-width="1"/><path d="M2 4.500h5M4.500 2v5" stroke="#27408b" stroke-width="1"/></svg>
<svg style="left:70px;top:413px;" width="12" height="15" viewBox="0 0 12 15"><path d="M0.600 2.800v9a5.400 2.300 0 0 0 10.800 0v-9z" fill="#3a3a3a"/><ellipse cx="6" cy="2.800" rx="5.400" ry="2.300" fill="#ececec" stroke="#3a3a3a" stroke-width="1.100"/></svg>
<span style="left:88.80px;top:411.90px;font-size:11.7px;line-height:16px;color:#0c0c0c;letter-spacing:-0.250px;">d_</span>
<svg style="left:53px;top:435px;" width="9" height="9" viewBox="0 0 9 9"><rect x="0.500" y="0.500" width="8" height="8" fill="#fdfdfd" stroke="#9b9b9b" stroke-width="1"/><path d="M2 4.500h5M4.500 2v5" stroke="#27408b" stroke-width="1"/></svg>
<svg style="left:70px;top:431px;" width="12" height="15" viewBox="0 0 12 15"><path d="M0.600 2.800v9a5.400 2.300 0 0 0 10.800 0v-9z" fill="#3a3a3a"/><ellipse cx="6" cy="2.800" rx="5.400" ry="2.300" fill="#ececec" stroke="#3a3a3a" stroke-width="1.100"/></svg>
<span style="left:88.80px;top:429.90px;font-size:11.7px;line-height:16px;color:#0c0c0c;letter-spacing:-0.250px;">DC</span>
<svg style="left:53px;top:453px;" width="9" height="9" viewBox="0 0 9 9"><rect x="0.500" y="0.500" width="8" height="8" fill="#fdfdfd" stroke="#9b9b9b" stroke-width="1"/><path d="M2 4.500h5M4.500 2v5" stroke="#27408b" stroke-width="1"/></svg>
<svg style="left:70px;top:449px;" width="12" height="15" viewBox="0 0 12 15"><path d="M0.600 2.800v9a5.400 2.300 0 0 0 10.800 0v-9z" fill="#3a3a3a"/><ellipse cx="6" cy="2.800" rx="5.400" ry="2.300" fill="#ececec" stroke="#3a3a3a" stroke-width="1.100"/></svg>
<span style="left:88.80px;top:447.90px;font-size:11.7px;line-height:16px;color:#0c0c0c;letter-spacing:-0.250px;">DC</span>
<svg style="left:53px;top:471px;" width="9" height="9" viewBox="0 0 9 9"><rect x="0.500" y="0.500" width="8" height="8" fill="#fdfdfd" stroke="#9b9b9b" stroke-width="1"/><path d="M2 4.500h5M4.500 2v5" stroke="#27408b" stroke-width="1"/></svg>
<svg style="left:70px;top:467px;" width="12" height="15" viewBox="0 0 12 15"><path d="M0.600 2.800v9a5.400 2.300 0 0 0 10.800 0v-9z" fill="#3a3a3a"/><ellipse cx="6" cy="2.800" rx="5.400" ry="2.300" fill="#ececec" stroke="#3a3a3a" stroke-width="1.100"/></svg>
<span style="left:88.80px;top:465.90px;font-size:11.7px;line-height:16px;color:#0c0c0c;letter-spacing:-0.250px;">dc</span>
<svg style="left:53px;top:489px;" width="9" height="9" viewBox="0 0 9 9"><rect x="0.500" y="0.500" width="8" height="8" fill="#fdfdfd" stroke="#9b9b9b" stroke-width="1"/><path d="M2 4.500h5M4.500 2v5" stroke="#27408b" stroke-width="1"/></svg>
<svg style="left:70px;top:485px;" width="12" height="15" viewBox="0 0 12 15"><path d="M0.600 2.800v9a5.400 2.300 0 0 0 10.800 0v-9z" fill="#3a3a3a"/><ellipse cx="6" cy="2.800" rx="5.400" ry="2.300" fill="#ececec" stroke="#3a3a3a" stroke-width="1.100"/></svg>
<span style="left:88.80px;top:483.90px;font-size:11.7px;line-height:16px;color:#0c0c0c;letter-spacing:-0.250px;">DV</span>
<svg style="left:53px;top:507px;" width="9" height="9" viewBox="0 0 9 9"><rect x="0.500" y="0.500" width="8" height="8" fill="#fdfdfd" stroke="#9b9b9b" stroke-width="1"/><path d="M2 4.500h5M4.500 2v5" stroke="#27408b" stroke-width="1"/></svg>
<svg style="left:70px;top:503px;" width="12" height="15" viewBox="0 0 12 15"><path d="M0.600 2.800v9a5.400 2.300 0 0 0 10.800 0v-9z" fill="#3a3a3a"/><ellipse cx="6" cy="2.800" rx="5.400" ry="2.300" fill="#ececec" stroke="#3a3a3a" stroke-width="1.100"/></svg>
<span style="left:88.80px;top:501.90px;font-size:11.7px;line-height:16px;color:#0c0c0c;letter-spacing:-0.250px;">DV</span>
<svg style="left:53px;top:525px;" width="9" height="9" viewBox="0 0 9 9"><rect x="0.500" y="0.500" width="8" height="8" fill="#fdfdfd" stroke="#9b9b9b" stroke-width="1"/><path d="M2 4.500h5M4.500 2v5" stroke="#27408b" stroke-width="1"/></svg>
<svg style="left:70px;top:521px;" width="12" height="15" viewBox="0 0 12 15"><path d="M0.600 2.800v9a5.400 2.300 0 0 0 10.800 0v-9z" fill="#3a3a3a"/><ellipse cx="6" cy="2.800" rx="5.400" ry="2.300" fill="#ececec" stroke="#3a3a3a" stroke-width="1.100"/></svg>
<span style="left:88.80px;top:519.90px;font-size:11.7px;line-height:16px;color:#0c0c0c;letter-spacing:-0.250px;">DV</span>
<svg style="left:53px;top:543px;" width="9" height="9" viewBox="0 0 9 9"><rect x="0.500" y="0.500" width="8" height="8" fill="#fdfdfd" stroke="#9b9b9b" stroke-width="1"/><path d="M2 4.500h5M4.500 2v5" stroke="#27408b" stroke-width="1"/></svg>
<svg style="left:70px;top:539px;" width="12" height="15" viewBox="0 0 12 15"><path d="M0.600 2.800v9a5.400 2.300 0 0 0 10.800 0v-9z" fill="#3a3a3a"/><ellipse cx="6" cy="2.800" rx="5.400" ry="2.300" fill="#ececec" stroke="#3a3a3a" stroke-width="1.100"/></svg>
<span style="left:88.80px;top:537.90px;font-size:11.7px;line-height:16px;color:#0c0c0c;letter-spacing:-0.250px;">EX</span>
<svg style="left:53px;top:561px;" width="9" height="9" viewBox="0 0 9 9"><rect x="0.500" y="0.500" width="8" height="8" fill="#fdfdfd" stroke="#9b9b9b" stroke-width="1"/><path d="M2 4.500h5M4.500 2v5" stroke="#27408b" stroke-width="1"/></svg>
<svg style="left:70px;top:557px;" width="12" height="15" viewBox="0 0 12 15"><path d="M0.600 2.800v9a5.400 2.300 0 0 0 10.800 0v-9z" fill="#3a3a3a"/><ellipse cx="6" cy="2.800" rx="5.400" ry="2.300" fill="#ececec" stroke="#3a3a3a" stroke-width="1.100"/></svg>
<span style="left:88.80px;top:555.90px;font-size:11.7px;line-height:16px;color:#0c0c0c;letter-spacing:-0.250px;">EX</span>
<svg style="left:53px;top:579px;" width="9" height="9" viewBox="0 0 9 9"><rect x="0.500" y="0.500" width="8" height="8" fill="#fdfdfd" stroke="#9b9b9b" stroke-width="1"/><path d="M2 4.500h5M4.500 2v5" stroke="#27408b" stroke-width="1"/></svg>
<svg style="left:70px;top:575px;" width="12" height="15" viewBox="0 0 12 15"><path d="M0.600 2.800v9a5.400 2.300 0 0 0 10.800 0v-9z" fill="#3a3a3a"/><ellipse cx="6" cy="2.800" rx="5.400" ry="2.300" fill="#ececec" stroke="#3a3a3a" stroke-width="1.100"/></svg>
<span style="left:88.80px;top:573.90px;font-size:11.7px;line-height:16px;color:#0c0c0c;letter-spacing:-0.250px;">hi</span>
<svg style="left:53px;top:597px;" width="9" height="9" viewBox="0 0 9 9"><rect x="0.500" y="0.500" width="8" height="8" fill="#fdfdfd" stroke="#9b9b9b" stroke-width="1"/><path d="M2 4.500h5M4.500 2v5" stroke="#27408b" stroke-width="1"/></svg>
<svg style="left:70px;top:593px;" width="12" height="15" viewBox="0 0 12 15"><path d="M0.600 2.800v9a5.400 2.300 0 0 0 10.800 0v-9z" fill="#3a3a3a"/><ellipse cx="6" cy="2.800" rx="5.400" ry="2.300" fill="#ececec" stroke="#3a3a3a" stroke-width="1.100"/></svg>
<span style="left:88.80px;top:591.90px;font-size:11.7px;line-height:16px;color:#0c0c0c;letter-spacing:-0.250px;">sa</span>
<svg style="left:53px;top:615px;" width="9" height="9" viewBox="0 0 9 9"><rect x="0.500" y="0.500" width="8" height="8" fill="#fdfdfd" stroke="#9b9b9b" stroke-width="1"/><path d="M2 4.500h5M4.500 2v5" stroke="#27408b" stroke-width="1"/></svg>
<svg style="left:70px;top:611px;" width="12" height="15" viewBox="0 0 12 15"><path d="M0.600 2.800v9a5.400 2.300 0 0 0 10.800 0v-9z" fill="#3a3a3a"/><ellipse cx="6" cy="2.800" rx="5.400" ry="2.300" fill="#ececec" stroke="#3a3a3a" stroke-width="1.100"/></svg>
<span style="left:88.80px;top:609.90px;font-size:11.7px;line-height:16px;color:#0c0c0c;letter-spacing:-0.250px;">sc</span>
<svg style="left:53px;top:633px;" width="9" height="9" viewBox="0 0 9 9"><rect x="0.500" y="0.500" width="8" height="8" fill="#fdfdfd" stroke="#9b9b9b" stroke-width="1"/><path d="M2 4.500h5M4.500 2v5" stroke="#27408b" stroke-width="1"/></svg>
<svg style="left:70px;top:629px;" width="12" height="15" viewBox="0 0 12 15"><path d="M0.600 2.800v9a5.400 2.300 0 0 0 10.800 0v-9z" fill="#3a3a3a"/><ellipse cx="6" cy="2.800" rx="5.400" ry="2.300" fill="#ececec" stroke="#3a3a3a" stroke-width="1.100"/></svg>
<span style="left:88.80px;top:627.90px;font-size:11.7px;line-height:16px;color:#0c0c0c;letter-spacing:-0.250px;">sc</span>
<svg style="left:53px;top:651px;" width="9" height="9" viewBox="0 0 9 9"><rect x="0.500" y="0.500" width="8" height="8" fill="#fdfdfd" stroke="#9b9b9b" stroke-width="1"/><path d="M2 4.500h5M4.500 2v5" stroke="#27408b" stroke-width="1"/></svg>
<svg style="left:70px;top:647px;" width="12" height="15" viewBox="0 0 12 15"><path d="M0.600 2.800v9a5.400 2.300 0 0 0 10.800 0v-9z" fill="#3a3a3a"/><ellipse cx="6" cy="2.800" rx="5.400" ry="2.300" fill="#ececec" stroke="#3a3a3a" stroke-width="1.100"/></svg>
<span style="left:88.80px;top:645.90px;font-size:11.7px;line-height:16px;color:#0c0c0c;letter-spacing:-0.250px;">SQ</span>
<svg style="left:53px;top:669px;" width="9" height="9" viewBox="0 0 9 9"><rect x="0.500" y="0.500" width="8" height="8" fill="#fdfdfd" stroke="#9b9b9b" stroke-width="1"/><path d="M2 4.500h5M4.500 2v5" stroke="#27408b" stroke-width="1"/></svg>
<svg style="left:70px;top:665px;" width="12" height="15" viewBox="0 0 12 15"><path d="M0.600 2.800v9a5.400 2.300 0 0 0 10.800 0v-9z" fill="#3a3a3a"/><ellipse cx="6" cy="2.800" rx="5.400" ry="2.300" fill="#ececec" stroke="#3a3a3a" stroke-width="1.100"/></svg>
<span style="left:88.80px;top:663.90px;font-size:11.7px;line-height:16px;color:#0c0c0c;letter-spacing:-0.250px;">SQ</span>
<svg style="left:53px;top:687px;" width="9" height="9" viewBox="0 0 9 9"><rect x="0.500" y="0.500" width="8" height="8" fill="#fdfdfd" stroke="#9b9b9b" stroke-width="1"/><path d="M2 4.500h5M4.500 2v5" stroke="#27408b" stroke-width="1"/></svg>
<svg style="left:70px;top:683px;" width="12" height="15" viewBox="0 0 12 15"><path d="M0.600 2.800v9a5.400 2.300 0 0 0 10.800 0v-9z" fill="#3a3a3a"/><ellipse cx="6" cy="2.800" rx="5.400" ry="2.300" fill="#ececec" stroke="#3a3a3a" stroke-width="1.100"/></svg>
<span style="left:88.80px;top:681.90px;font-size:11.7px;line-height:16px;color:#0c0c0c;letter-spacing:-0.250px;">Sc</span>
<div style="left:8px;top:195px;width:4px;height:18px;background:#23c723;"></div>
<div style="left:418px;top:109px;width:266px;height:21px;background:#4d6082;"></div>
<div style="left:418px;top:128px;width:941px;height:2px;background:#4d6082;"></div>
<span style="left:421.80px;top:111.50px;font-size:11.7px;line-height:16px;color:#ffffff;letter-spacing:-0.228px;word-spacing:0.228px;">SQLQuery1.sql - DB...\SQL2019.Shop (sa)*</span>
<svg style="left:651px;top:116px;" width="9" height="8" viewBox="0 0 9 8"><path d="M0 3.500h3" stroke="#e6ebf5" stroke-width="1.100"/><path d="M3.500 0v7" stroke="#e6ebf5" stroke-width="1.100"/><path d="M3.500 1.500h4v3.800h-4" fill="none" stroke="#e6ebf5" stroke-width="1"/><path d="M3.500 5h4" stroke="#e6ebf5" stroke-width="1.600"/></svg>
<svg style="left:669px;top:115px;" width="10" height="10" viewBox="0 0 10 10"><path d="M0.800 0.800l8.400 8.400M9.200 0.800l-8.400 8.400" stroke="#f0f3fa" stroke-width="1.400"/></svg>
<svg style="left:1348px;top:118px;" width="8" height="5" viewBox="0 0 8 5"><path d="M0 0h8l-4 4.500z" fill="#e3e8f3"/></svg>
<div style="left:418px;top:130px;width:941px;height:528px;background:#ffffff;"></div>
<div style="left:418px;top:130px;width:1px;height:528px;background:#cdd3e3;"></div>
<div style="left:419px;top:130px;width:15px;height:528px;background:#e6e7e8;"></div>
<div style="left:436px;top:130px;width:4px;height:433.5px;background:#ffe85a;"></div>
<div style="left:450px;top:130px;width:888px;height:14px;background:#ffffff;border:1px solid #e4e4f0;border-top:none;box-sizing:border-box;"></div>
<div style="left:1339px;top:130px;width:19px;height:528px;background:#e8e8ec;"></div>
<div style="left:1339px;top:130px;width:19px;height:17px;background:#e9edfb;border:1px solid #a9b2c8;box-sizing:border-box;"></div>
<svg style="left:1343px;top:133px;" width="11" height="11" viewBox="0 0 11 11"><path d="M0 4.500h11M0 6.500h11" stroke="#1e1e1e" stroke-width="1"/><path d="M5.500 0.500v3.500M5.500 7v3.500" stroke="#1e1e1e" stroke-width="1"/><path d="M3.500 2.500l2-2.500 2 2.500zM3.500 8.500l2 2.500 2-2.500z" fill="#1e1e1e"/></svg>
<svg style="left:1344px;top:153px;" width="9" height="5" viewBox="0 0 9 5"><path d="M0 5l4.500-5 4.500 5z" fill="#868999"/></svg>
<div style="left:1339px;top:163px;width:19px;height:2px;background:#0000cd;"></div>
<div style="left:1340px;top:165px;width:5px;height:215px;background:#ffe85a;"></div>
<div style="left:1345px;top:165px;width:9px;height:261px;background:#c2c3c9;"></div>
<svg style="left:1344px;top:645px;" width="9" height="5" viewBox="0 0 9 5"><path d="M0 0l4.500 5 4.500-5z" fill="#868999"/></svg>
<div style="left:418px;top:658px;width:941px;height:18px;background:#e8e8ec;"></div>
<div style="left:419px;top:658px;width:60px;height:17px;background:#fcfcff;border:1px solid #b4bdd2;box-sizing:border-box;"></div>
<span style="left:420.30px;top:658.50px;font-size:11.7px;line-height:16px;color:#0c0c0c;letter-spacing:-0.133px;word-spacing:0.133px;">85 %</span>
<svg style="left:469px;top:665.5px;" width="6" height="3" viewBox="0 0 6 3"><path d="M0 0h6L3 3z" fill="#1e1e1e"/></svg>
<svg style="left:485px;top:662px;" width="5" height="9" viewBox="0 0 5 9"><path d="M5 0l-5 4.500 5 4.500z" fill="#868999"/></svg>
<svg style="left:1328px;top:662px;" width="5" height="9" viewBox="0 0 5 9"><path d="M0 0l5 4.500-5 4.500z" fill="#868999"/></svg>
<div style="left:496px;top:662px;width:92px;height:9px;background:#c2c3c9;"></div>
<div style="left:418px;top:676px;width:941px;height:22px;background:#f0e68c;"></div>
<svg style="left:423px;top:679px;" width="16" height="16" viewBox="0 0 16 16"><path d="M3 0.500v4M7.500 0.500v4" stroke="#222" stroke-width="1.700"/><path d="M1 4.500h8.500v3l-2 2.200h-4.500l-2-2.200z" fill="#222"/><rect x="4.300" y="9.500" width="2" height="5" fill="#222"/><circle cx="11" cy="11.500" r="3.800" fill="#2fa043" stroke="#f0e68c" stroke-width="0.800"/><path d="M9 11.500l1.500 1.500 2.500-3" stroke="#fff" stroke-width="1.200" fill="none"/></svg>
<span style="left:441.80px;top:679.00px;font-size:11.7px;line-height:16px;color:#0c0c0c;letter-spacing:0.161px;word-spacing:-0.161px;">Connected. (1/1)</span>
<div style="left:969px;top:681px;width:1px;height:12px;background:#b4ae84;"></div>
<div style="left:970px;top:681px;width:1px;height:12px;background:#f8f2bd;"></div>
<div style="left:1152px;top:681px;width:1px;height:12px;background:#b4ae84;"></div>
<div style="left:1153px;top:681px;width:1px;height:12px;background:#f8f2bd;"></div>
<div style="left:1205px;top:681px;width:1px;height:12px;background:#b4ae84;"></div>
<div style="left:1206px;top:681px;width:1px;height:12px;background:#f8f2bd;"></div>
<div style="left:1245px;top:681px;width:1px;height:12px;background:#b4ae84;"></div>
<div style="left:1246px;top:681px;width:1px;height:12px;background:#f8f2bd;"></div>
<div style="left:1300px;top:681px;width:1px;height:12px;background:#b4ae84;"></div>
<div style="left:1301px;top:681px;width:1px;height:12px;background:#f8f2bd;"></div>
<span style="left:974.30px;top:679.00px;font-size:11.7px;line-height:16px;color:#0c0c0c;letter-spacing:-0.585px;word-spacing:0.585px;">DBFSQLSRV\SQL2019 (15.0 RTM)</span>
<span style="left:1157.30px;top:679.00px;font-size:11.7px;line-height:16px;color:#0c0c0c;letter-spacing:-0.336px;word-spacing:0.336px;">sa (103)</span>
<span style="left:1210.80px;top:679.00px;font-size:11.7px;line-height:16px;color:#0c0c0c;letter-spacing:0.026px;">Shop</span>
<span style="left:1250.30px;top:679.00px;font-size:11.7px;line-height:16px;color:#0c0c0c;letter-spacing:-0.377px;">00:00:00</span>
<span style="left:1305.30px;top:679.00px;font-size:11.7px;line-height:16px;color:#0c0c0c;letter-spacing:0.110px;word-spacing:-0.110px;">0 rows</span>
<div style="left:418px;top:130px;width:921px;height:528px;overflow:hidden;font-family:'Liberation Mono',monospace;font-size:10.14px;"><span style="left:32.5px;top:0.90px;line-height:14px;"><span style="position:static;color:#0000ff">CREATE DATABASE</span><span style="position:static;color:#000000"> Shop</span><span style="position:static;color:#808080">;</span></span><span style="left:32.5px;top:29.80px;line-height:14px;"><span style="position:static;color:#0000ff">USE</span><span style="position:static;color:#000000"> Shop</span><span style="position:static;color:#808080">;</span></span><span style="left:32.5px;top:44.25px;line-height:14px;"><span style="position:static;color:#0000ff">CREATE TABLE</span><span style="position:static;color:#000000"> Person </span><span style="position:static;color:#808080">(</span></span><span style="left:32.5px;top:58.70px;line-height:14px;"><span style="position:static;color:#000000">    PersonId </span><span style="position:static;color:#0000ff">INT IDENTITY </span><span style="position:static;color:#808080">(</span><span style="position:static;color:#000000">1</span><span style="position:static;color:#808080">,</span><span style="position:static;color:#000000"> 1</span><span style="position:static;color:#808080">)</span><span style="position:static;color:#0000ff"> PRIMARY KEY</span></span><span style="left:32.5px;top:73.15px;line-height:14px;"><span style="position:static;color:#808080">   ,</span><span style="position:static;color:#0000ff">Name VARCHAR</span><span style="position:static;color:#808080">(</span><span style="position:static;color:#000000">100</span><span style="position:static;color:#808080">)</span></span><span style="left:32.5px;top:87.60px;line-height:14px;"><span style="position:static;color:#808080">   ,</span><span style="position:static;color:#0000ff">Password VARCHAR</span><span style="position:static;color:#808080">(</span><span style="position:static;color:#000000">6</span><span style="position:static;color:#808080">)</span><span style="position:static;color:#ff00ff"> COLLATE</span><span style="position:static;color:#000000"> Latin1_General_BIN2</span><span style="position:static;color:#808080"> not null</span></span><span style="left:32.5px;top:102.05px;line-height:14px;"><span style="position:static;color:#808080">   ,</span><span style="position:static;color:#000000">SSN </span><span style="position:static;color:#0000ff">VARCHAR</span><span style="position:static;color:#808080">(</span><span style="position:static;color:#000000">11</span><span style="position:static;color:#808080">)</span><span style="position:static;color:#ff00ff"> COLLATE</span><span style="position:static;color:#000000"> Latin1_General_BIN2</span><span style="position:static;color:#808080"> not null</span></span><span style="left:32.5px;top:116.50px;line-height:14px;"><span style="position:static;color:#808080">);</span></span><span style="left:32.5px;top:145.40px;line-height:14px;"><span style="position:static;color:#0000ff">INSERT INTO</span><span style="position:static;color:#000000"> Person </span><span style="position:static;color:#808080">(</span><span style="position:static;color:#0000ff">Name</span><span style="position:static;color:#808080">,</span><span style="position:static;color:#0000ff"> Password</span><span style="position:static;color:#808080">,</span><span style="position:static;color:#000000"> SSN</span><span style="position:static;color:#808080">)</span></span><span style="left:32.5px;top:159.85px;line-height:14px;"><span style="position:static;color:#0000ff">VALUES </span><span style="position:static;color:#808080">(</span><span style="position:static;color:#ff0000">&#x27;James&#x27;</span><span style="position:static;color:#808080">,</span><span style="position:static;color:#ff0000"> &#x27;dxv4cL&#x27;</span><span style="position:static;color:#808080">,</span><span style="position:static;color:#ff0000"> &#x27;417-86-5080&#x27;</span><span style="position:static;color:#808080">),</span><span style="position:static;color:#808080"> (</span><span style="position:static;color:#ff0000">&#x27;Emily&#x27;</span><span style="position:static;color:#808080">,</span><span style="position:static;color:#ff0000"> &#x27;trv5cN&#x27;</span><span style="position:static;color:#808080">,</span><span style="position:static;color:#ff0000"> &#x27;247-13-2079&#x27;</span><span style="position:static;color:#808080">);</span></span><span style="left:32.5px;top:188.75px;line-height:14px;"><span style="position:static;color:#0000ff">SELECT </span><span style="position:static;color:#808080">*</span><span style="position:static;color:#0000ff"> FROM</span><span style="position:static;color:#000000"> Person</span><span style="position:static;color:#808080">;</span></span><span style="left:32.5px;top:217.65px;line-height:14px;"><span style="position:static;color:#0000ff">CREATE COLUMN MASTER KEY</span><span style="position:static;color:#000000"> MyCMK</span></span><span style="left:32.5px;top:232.10px;line-height:14px;"><span style="position:static;color:#0000ff">WITH</span></span><span style="left:32.5px;top:246.55px;line-height:14px;"><span style="position:static;color:#808080">(</span></span><span style="left:32.5px;top:261.00px;line-height:14px;"><span style="position:static;color:#0000ff">    KEY_STORE_PROVIDER_NAME </span><span style="position:static;color:#808080">=</span><span style="position:static;color:#ff0000"> N&#x27;MSSQL_CERTIFICATE_STORE&#x27;</span><span style="position:static;color:#808080">,</span></span><span style="left:32.5px;top:275.45px;line-height:14px;"><span style="position:static;color:#0000ff">    KEY_PATH </span><span style="position:static;color:#808080">=</span><span style="position:static;color:#ff0000"> N&#x27;CurrentUser/my/215BE046B1650F033DD1742BA9FCE358E820C342&#x27;</span></span><span style="left:32.5px;top:289.90px;line-height:14px;"><span style="position:static;color:#808080">)</span></span><span style="left:32.5px;top:304.35px;line-height:14px;"><span style="position:static;color:#0000ff">GO</span></span><span style="left:32.5px;top:333.25px;line-height:14px;"><span style="position:static;color:#0000ff">CREATE COLUMN ENCRYPTION KEY</span><span style="position:static;color:#000000"> MyCEK</span></span><span style="left:32.5px;top:347.70px;line-height:14px;"><span style="position:static;color:#0000ff">WITH VALUES</span></span><span style="left:32.5px;top:362.15px;line-height:14px;"><span style="position:static;color:#808080">(</span></span><span style="left:32.5px;top:376.60px;line-height:14px;"><span style="position:static;color:#0000ff">    COLUMN_MASTER_KEY </span><span style="position:static;color:#808080">=</span><span style="position:static;color:#000000"> MyCMK</span><span style="position:static;color:#808080">,</span></span><span style="left:32.5px;top:391.05px;line-height:14px;"><span style="position:static;color:#0000ff">    ALGORITHM </span><span style="position:static;color:#808080">=</span><span style="position:static;color:#ff0000"> &#x27;RSA_OAEP&#x27;</span><span style="position:static;color:#808080">,</span></span><span style="left:32.5px;top:405.50px;line-height:14px;"><span style="position:static;color:#0000ff">    ENCRYPTED_VALUE </span><span style="position:static;color:#808080">=</span><span style="position:static;color:#000000"> 0x016E000001630075007200720065006E00740075007300650072002F006D0079002F003200310035006200650030003400360062003100360035003000660030003300330064006400</span></span><span style="left:32.5px;top:419.95px;line-height:14px;"><span style="position:static;color:#808080">);</span></span></div>
<svg style="left:442px;top:133px;" width="8" height="8" viewBox="0 0 8 8"><rect x="0.500" y="0.500" width="7" height="7" fill="#fff" stroke="#a5a5a5" stroke-width="1"/><path d="M2 4h4" stroke="#404040" stroke-width="1"/></svg>
<div style="left:446px;top:141px;width:1px;height:36.25px;background:#a5a5a5;"></div>
<svg style="left:442px;top:177px;" width="8" height="8" viewBox="0 0 8 8"><rect x="0.500" y="0.500" width="7" height="7" fill="#fff" stroke="#a5a5a5" stroke-width="1"/><path d="M2 4h4" stroke="#404040" stroke-width="1"/></svg>
<div style="left:446px;top:185px;width:1px;height:74.94999999999999px;background:#a5a5a5;"></div>
<div style="left:446px;top:258.95px;width:4px;height:1px;background:#a5a5a5;"></div>
<div style="left:446px;top:259.95px;width:1px;height:18.44999999999999px;background:#a5a5a5;"></div>
<svg style="left:442px;top:278px;" width="8" height="8" viewBox="0 0 8 8"><rect x="0.500" y="0.500" width="7" height="7" fill="#fff" stroke="#a5a5a5" stroke-width="1"/><path d="M2 4h4" stroke="#404040" stroke-width="1"/></svg>
<div style="left:446px;top:286px;width:1px;height:17.299999999999955px;background:#a5a5a5;"></div>
<div style="left:446px;top:302.29999999999995px;width:4px;height:1px;background:#a5a5a5;"></div>
<div style="left:446px;top:303.29999999999995px;width:1px;height:47.35000000000002px;background:#a5a5a5;"></div>
<svg style="left:442px;top:350px;" width="8" height="8" viewBox="0 0 8 8"><rect x="0.500" y="0.500" width="7" height="7" fill="#fff" stroke="#a5a5a5" stroke-width="1"/><path d="M2 4h4" stroke="#404040" stroke-width="1"/></svg>
<div style="left:446px;top:358px;width:1px;height:75.35000000000002px;background:#a5a5a5;"></div>
<div style="left:446px;top:432.35px;width:4px;height:1px;background:#a5a5a5;"></div>
<svg style="left:442px;top:466px;" width="8" height="8" viewBox="0 0 8 8"><rect x="0.500" y="0.500" width="7" height="7" fill="#fff" stroke="#a5a5a5" stroke-width="1"/><path d="M2 4h4" stroke="#404040" stroke-width="1"/></svg>
<div style="left:446px;top:474px;width:1px;height:89.39999999999998px;background:#a5a5a5;"></div>
<div style="left:446px;top:562.4px;width:4px;height:1px;background:#a5a5a5;"></div>
<div style="left:99px;top:169px;width:234px;height:551px;background:#f0f0f0;border:1px solid #50607f;box-sizing:border-box;box-shadow:2.5px 2.5px 2.5px rgba(0,0,0,0.5);"></div>
<div style="left:100px;top:170px;width:24px;height:549px;background:#cfd6e5;"></div>
<div style="left:101px;top:570px;width:230px;height:22px;background:#fdf4bf;border:1px solid #c9b26a;box-sizing:border-box;"></div>
<span style="left:134.80px;top:174.00px;font-size:11.7px;line-height:16px;color:#000000;letter-spacing:-0.161px;word-spacing:0.161px;">New Database...</span>
<span style="left:134.80px;top:196.00px;font-size:11.7px;line-height:16px;color:#000000;letter-spacing:0.055px;word-spacing:-0.055px;">New Query</span>
<span style="left:134.80px;top:218.00px;font-size:11.7px;line-height:16px;color:#000000;letter-spacing:-0.230px;word-spacing:0.230px;">Script Database as</span>
<svg style="left:317px;top:222.8px;" width="5" height="7" viewBox="0 0 5 7"><path d="M0 0l4.500 3.500-4.500 3.500z" fill="#000"/></svg>
<div style="left:132px;top:240px;width:199px;height:1px;background:#8b98b3;"></div>
<span style="left:134.80px;top:246.00px;font-size:11.7px;line-height:16px;color:#000000;letter-spacing:-0.627px;">Tasks</span>
<svg style="left:317px;top:250.8px;" width="5" height="7" viewBox="0 0 5 7"><path d="M0 0l4.500 3.500-4.500 3.500z" fill="#000"/></svg>
<div style="left:132px;top:268px;width:199px;height:1px;background:#8b98b3;"></div>
<span style="left:134.80px;top:274.00px;font-size:11.7px;line-height:16px;color:#000000;letter-spacing:0.012px;">Policies</span>
<svg style="left:317px;top:278.8px;" width="5" height="7" viewBox="0 0 5 7"><path d="M0 0l4.500 3.500-4.500 3.500z" fill="#000"/></svg>
<span style="left:134.80px;top:296.00px;font-size:11.7px;line-height:16px;color:#000000;letter-spacing:-0.342px;">Facets</span>
<div style="left:132px;top:318px;width:199px;height:1px;background:#8b98b3;"></div>
<span style="left:134.80px;top:324.00px;font-size:11.7px;line-height:16px;color:#000000;letter-spacing:-0.124px;word-spacing:0.124px;">Start PowerShell</span>
<span style="left:134.80px;top:346.00px;font-size:11.7px;line-height:16px;color:#000000;letter-spacing:-0.075px;word-spacing:0.075px;">Azure Data Studio</span>
<svg style="left:317px;top:350.8px;" width="5" height="7" viewBox="0 0 5 7"><path d="M0 0l4.500 3.500-4.500 3.500z" fill="#000"/></svg>
<div style="left:132px;top:368px;width:199px;height:1px;background:#8b98b3;"></div>
<span style="left:134.80px;top:374.00px;font-size:11.7px;line-height:16px;color:#000000;letter-spacing:0.054px;word-spacing:-0.054px;">Data Pump</span>
<svg style="left:317px;top:378.8px;" width="5" height="7" viewBox="0 0 5 7"><path d="M0 0l4.500 3.500-4.500 3.500z" fill="#000"/></svg>
<span style="left:134.80px;top:396.00px;font-size:11.7px;line-height:16px;color:#000000;letter-spacing:0.123px;word-spacing:-0.123px;">Index Manager</span>
<svg style="left:317px;top:400.8px;" width="5" height="7" viewBox="0 0 5 7"><path d="M0 0l4.500 3.500-4.500 3.500z" fill="#000"/></svg>
<span style="left:134.80px;top:418.00px;font-size:11.7px;line-height:16px;color:#000000;letter-spacing:0.731px;">Monitor</span>
<svg style="left:317px;top:422.8px;" width="5" height="7" viewBox="0 0 5 7"><path d="M0 0l4.500 3.500-4.500 3.500z" fill="#000"/></svg>
<span style="left:134.80px;top:440.00px;font-size:11.7px;line-height:16px;color:#000000;letter-spacing:0.010px;word-spacing:-0.010px;">SQL Complete</span>
<svg style="left:317px;top:444.8px;" width="5" height="7" viewBox="0 0 5 7"><path d="M0 0l4.500 3.500-4.500 3.500z" fill="#000"/></svg>
<span style="left:134.80px;top:462.00px;font-size:11.7px;line-height:16px;color:#000000;letter-spacing:0.014px;word-spacing:-0.014px;">Unit Test</span>
<svg style="left:317px;top:466.8px;" width="5" height="7" viewBox="0 0 5 7"><path d="M0 0l4.500 3.500-4.500 3.500z" fill="#000"/></svg>
<span style="left:134.80px;top:484.00px;font-size:11.7px;line-height:16px;color:#000000;letter-spacing:-0.034px;word-spacing:0.034px;">Data Generation</span>
<svg style="left:317px;top:488.8px;" width="5" height="7" viewBox="0 0 5 7"><path d="M0 0l4.500 3.500-4.500 3.500z" fill="#000"/></svg>
<span style="left:134.80px;top:506.00px;font-size:11.7px;line-height:16px;color:#000000;letter-spacing:0.297px;">Documenter</span>
<svg style="left:317px;top:510.79999999999995px;" width="5" height="7" viewBox="0 0 5 7"><path d="M0 0l4.500 3.500-4.500 3.500z" fill="#000"/></svg>
<span style="left:134.80px;top:528.00px;font-size:11.7px;line-height:16px;color:#000000;letter-spacing:0.114px;word-spacing:-0.114px;">Source Control</span>
<svg style="left:317px;top:532.8px;" width="5" height="7" viewBox="0 0 5 7"><path d="M0 0l4.500 3.500-4.500 3.500z" fill="#000"/></svg>
<span style="left:134.80px;top:550.00px;font-size:11.7px;line-height:16px;color:#000000;letter-spacing:0.032px;word-spacing:-0.032px;">Data Compare</span>
<svg style="left:317px;top:554.8px;" width="5" height="7" viewBox="0 0 5 7"><path d="M0 0l4.500 3.500-4.500 3.500z" fill="#000"/></svg>
<span style="left:134.80px;top:572.00px;font-size:11.7px;line-height:16px;color:#000000;letter-spacing:0.009px;word-spacing:-0.009px;">Schema Compare</span>
<svg style="left:317px;top:576.8px;" width="5" height="7" viewBox="0 0 5 7"><path d="M0 0l4.500 3.500-4.500 3.500z" fill="#000"/></svg>
<div style="left:132px;top:594px;width:199px;height:1px;background:#8b98b3;"></div>
<span style="left:134.80px;top:600.00px;font-size:11.7px;line-height:16px;color:#000000;letter-spacing:-0.094px;">Reports</span>
<svg style="left:317px;top:604.8px;" width="5" height="7" viewBox="0 0 5 7"><path d="M0 0l4.500 3.500-4.500 3.500z" fill="#000"/></svg>
<div style="left:132px;top:622px;width:199px;height:1px;background:#8b98b3;"></div>
<span style="left:134.80px;top:628.00px;font-size:11.7px;line-height:16px;color:#000000;letter-spacing:-0.164px;">Rename</span>
<span style="left:134.80px;top:650.00px;font-size:11.7px;line-height:16px;color:#000000;letter-spacing:-0.084px;">Delete</span>
<div style="left:132px;top:672px;width:199px;height:1px;background:#8b98b3;"></div>
<span style="left:134.80px;top:678.00px;font-size:11.7px;line-height:16px;color:#000000;letter-spacing:-0.344px;">Refresh</span>
<span style="left:134.80px;top:700.00px;font-size:11.7px;line-height:16px;color:#000000;letter-spacing:-0.047px;">Properties</span>
<svg style="left:104.5px;top:374px;" width="15" height="16" viewBox="0 0 15 16"><defs><linearGradient id="hx0" x1="0" y1="0" x2="0" y2="1"><stop offset="0" stop-color="#9a45ff"/><stop offset="1" stop-color="#5a1fc0"/></linearGradient></defs><path d="M7.500 0.200l7 4v7.600l-7 4-7-4v-7.600z" fill="url(#hx0)"/><path d="M7.500 8v7.800l-7-4v-7.600z" fill="#6a25d6" opacity="0.550"/><path d="M7.500 8v7.800l7-4v-7.600z" fill="#4a14a8" opacity="0.550"/><path d="M4.500 5v3.500M7.500 4v6.500M10.500 5v3.500M5.500 8.500l2 2.300 2-2.300M4 12h7" stroke="#fff" fill="none" stroke-width="1.100"/></svg>
<svg style="left:104.5px;top:396px;" width="15" height="16" viewBox="0 0 15 16"><defs><linearGradient id="hx1" x1="0" y1="0" x2="0" y2="1"><stop offset="0" stop-color="#9a45ff"/><stop offset="1" stop-color="#5a1fc0"/></linearGradient></defs><path d="M7.500 0.200l7 4v7.600l-7 4-7-4v-7.600z" fill="url(#hx1)"/><path d="M7.500 8v7.800l-7-4v-7.600z" fill="#6a25d6" opacity="0.550"/><path d="M7.500 8v7.800l7-4v-7.600z" fill="#4a14a8" opacity="0.550"/><path d="M10 5.500h-4.500v2.500h4v3h-5M7.500 4l3 1.500M4.500 9.500l3 2" stroke="#fff" fill="none" stroke-width="1.200"/></svg>
<svg style="left:104.5px;top:418px;" width="15" height="16" viewBox="0 0 15 16"><defs><linearGradient id="hx2" x1="0" y1="0" x2="0" y2="1"><stop offset="0" stop-color="#9a45ff"/><stop offset="1" stop-color="#5a1fc0"/></linearGradient></defs><path d="M7.500 0.200l7 4v7.600l-7 4-7-4v-7.600z" fill="url(#hx2)"/><path d="M7.500 8v7.800l-7-4v-7.600z" fill="#6a25d6" opacity="0.550"/><path d="M7.500 8v7.800l7-4v-7.600z" fill="#4a14a8" opacity="0.550"/><path d="M3 8.500h2.200l1-2.500 1.600 4.500 1.200-2.500h3" stroke="#fff" fill="none" stroke-width="1.100"/></svg>
<svg style="left:104.5px;top:440px;" width="15" height="16" viewBox="0 0 15 16"><defs><linearGradient id="hx3" x1="0" y1="0" x2="0" y2="1"><stop offset="0" stop-color="#9a45ff"/><stop offset="1" stop-color="#5a1fc0"/></linearGradient></defs><path d="M7.500 0.200l7 4v7.600l-7 4-7-4v-7.600z" fill="url(#hx3)"/><path d="M7.500 8v7.800l-7-4v-7.600z" fill="#6a25d6" opacity="0.550"/><path d="M7.500 8v7.800l7-4v-7.600z" fill="#4a14a8" opacity="0.550"/><path d="M10.500 5v3.500h-5.500M6.800 6.500l-2 2 2 2" stroke="#fff" fill="none" stroke-width="1.300"/></svg>
<svg style="left:104.5px;top:462px;" width="15" height="16" viewBox="0 0 15 16"><defs><linearGradient id="hx4" x1="0" y1="0" x2="0" y2="1"><stop offset="0" stop-color="#9a45ff"/><stop offset="1" stop-color="#5a1fc0"/></linearGradient></defs><path d="M7.500 0.200l7 4v7.600l-7 4-7-4v-7.600z" fill="url(#hx4)"/><path d="M7.500 8v7.800l-7-4v-7.600z" fill="#6a25d6" opacity="0.550"/><path d="M7.500 8v7.800l7-4v-7.600z" fill="#4a14a8" opacity="0.550"/><path d="M6 4.500h3M6.500 4.500v2.500l-2 4.500h6l-2-4.500v-2.500" stroke="#fff" fill="none" stroke-width="1.100"/><path d="M5.500 9.500h4l1 2h-6z" fill="#fff"/></svg>
<svg style="left:104.5px;top:484px;" width="15" height="16" viewBox="0 0 15 16"><defs><linearGradient id="hx5" x1="0" y1="0" x2="0" y2="1"><stop offset="0" stop-color="#9a45ff"/><stop offset="1" stop-color="#5a1fc0"/></linearGradient></defs><path d="M7.500 0.200l7 4v7.600l-7 4-7-4v-7.600z" fill="url(#hx5)"/><path d="M7.500 8v7.800l-7-4v-7.600z" fill="#6a25d6" opacity="0.550"/><path d="M7.500 8v7.800l7-4v-7.600z" fill="#4a14a8" opacity="0.550"/><circle cx="7.500" cy="8" r="2.300" stroke="#fff" fill="none" stroke-width="1.300"/><path d="M7.500 3.800v1.500M7.500 10.700v1.500M3.800 5.900l1.400 0.800M9.800 9.300l1.400 0.800M3.800 10.100l1.400-0.800M9.800 6.700l1.400-0.800" stroke="#fff" fill="none" stroke-width="1.300"/></svg>
<svg style="left:104.5px;top:506px;" width="15" height="16" viewBox="0 0 15 16"><defs><linearGradient id="hx6" x1="0" y1="0" x2="0" y2="1"><stop offset="0" stop-color="#9a45ff"/><stop offset="1" stop-color="#5a1fc0"/></linearGradient></defs><path d="M7.500 0.200l7 4v7.600l-7 4-7-4v-7.600z" fill="url(#hx6)"/><path d="M7.500 8v7.800l-7-4v-7.600z" fill="#6a25d6" opacity="0.550"/><path d="M7.500 8v7.800l7-4v-7.600z" fill="#4a14a8" opacity="0.550"/><path d="M10.500 5h-5.500a1 1 0 0 0 0 3h5M5 8a1 1 0 0 0 0 3h5.500M7 6.500h3.500M7 9.500h3.500" stroke="#fff" fill="none" stroke-width="1.100"/></svg>
<svg style="left:104.5px;top:528px;" width="15" height="16" viewBox="0 0 15 16"><defs><linearGradient id="hx7" x1="0" y1="0" x2="0" y2="1"><stop offset="0" stop-color="#9a45ff"/><stop offset="1" stop-color="#5a1fc0"/></linearGradient></defs><path d="M7.500 0.200l7 4v7.600l-7 4-7-4v-7.600z" fill="url(#hx7)"/><path d="M7.500 8v7.800l-7-4v-7.600z" fill="#6a25d6" opacity="0.550"/><path d="M7.500 8v7.800l7-4v-7.600z" fill="#4a14a8" opacity="0.550"/><circle cx="5.500" cy="5.500" r="1.400" stroke="#fff" fill="none" stroke-width="1"/><circle cx="5.500" cy="11" r="1.400" stroke="#fff" fill="none" stroke-width="1"/><circle cx="10" cy="8.500" r="1.400" stroke="#fff" fill="none" stroke-width="1"/><path d="M5.500 7v2.500M6.500 10c1.500-0.500 2.500-0.500 3-0.800" stroke="#fff" fill="none" stroke-width="1"/></svg>
<svg style="left:104.5px;top:550px;" width="15" height="16" viewBox="0 0 15 16"><defs><linearGradient id="hx8" x1="0" y1="0" x2="0" y2="1"><stop offset="0" stop-color="#9a45ff"/><stop offset="1" stop-color="#5a1fc0"/></linearGradient></defs><path d="M7.500 0.200l7 4v7.600l-7 4-7-4v-7.600z" fill="url(#hx8)"/><path d="M7.500 8v7.800l-7-4v-7.600z" fill="#6a25d6" opacity="0.550"/><path d="M7.500 8v7.800l7-4v-7.600z" fill="#4a14a8" opacity="0.550"/><circle cx="5.800" cy="6" r="1.900" stroke="#fff" fill="none" stroke-width="1.100"/><circle cx="9.500" cy="10" r="1.900" stroke="#fff" fill="none" stroke-width="1.100"/><path d="M4.500 6h2.500M8.200 10h2.500" stroke="#fff" fill="none" stroke-width="0.900"/></svg>
<svg style="left:104.5px;top:572px;" width="15" height="16" viewBox="0 0 15 16"><defs><linearGradient id="hx9" x1="0" y1="0" x2="0" y2="1"><stop offset="0" stop-color="#9a45ff"/><stop offset="1" stop-color="#5a1fc0"/></linearGradient></defs><path d="M7.500 0.200l7 4v7.600l-7 4-7-4v-7.600z" fill="url(#hx9)"/><path d="M7.500 8v7.800l-7-4v-7.600z" fill="#6a25d6" opacity="0.550"/><path d="M7.500 8v7.800l7-4v-7.600z" fill="#4a14a8" opacity="0.550"/><rect x="6.500" y="4.500" width="4.500" height="4.500" fill="#fff"/><rect x="4" y="7.500" width="4.500" height="4.500" fill="#d9c4ff" stroke="#fff" stroke-width="0.800"/></svg>
<div style="left:333px;top:569px;width:143px;height:76px;background:#eaf0ff;border:1px solid #50607f;box-sizing:border-box;box-shadow:2.5px 2.5px 2.5px rgba(0,0,0,0.5);"></div>
<div style="left:334px;top:570px;width:23px;height:74px;background:#cdd4e6;"></div>
<div style="left:334px;top:570px;width:141px;height:22px;background:#fdf4bf;border:1px solid #4a5a7d;box-sizing:border-box;"></div>
<span style="left:367.80px;top:573.50px;font-size:11.7px;line-height:16px;color:#000000;letter-spacing:-0.408px;word-spacing:0.408px;">Set as Source</span>
<span style="left:367.80px;top:595.50px;font-size:11.7px;line-height:16px;color:#000000;letter-spacing:-0.382px;word-spacing:0.382px;">Set as Target</span>
<div style="left:365px;top:618px;width:109px;height:1px;background:#8b98b3;"></div>
<span style="left:367.80px;top:623.50px;font-size:11.7px;line-height:16px;color:#000000;letter-spacing:-0.262px;word-spacing:0.262px;">Recent Files</span>
<svg style="left:460px;top:628.3px;" width="5" height="7" viewBox="0 0 5 7"><path d="M0 0l4.500 3.500-4.500 3.500z" fill="#000"/></svg>
<div style="left:101px;top:568px;width:376px;height:26px;border:3px solid #ee1111;box-sizing:border-box;background:transparent;"></div>
<svg style="left:4px;top:711px;" width="18" height="12" viewBox="0 0 18 12"><path d="M4.500 1h12l-3.500 10h-12z" fill="none" stroke="#fff" stroke-width="1.300"/></svg>
<span style="left:26.30px;top:709.00px;font-size:11.7px;line-height:16px;color:#ffffff;letter-spacing:-0.230px;">Ready</span>
</body></html>
